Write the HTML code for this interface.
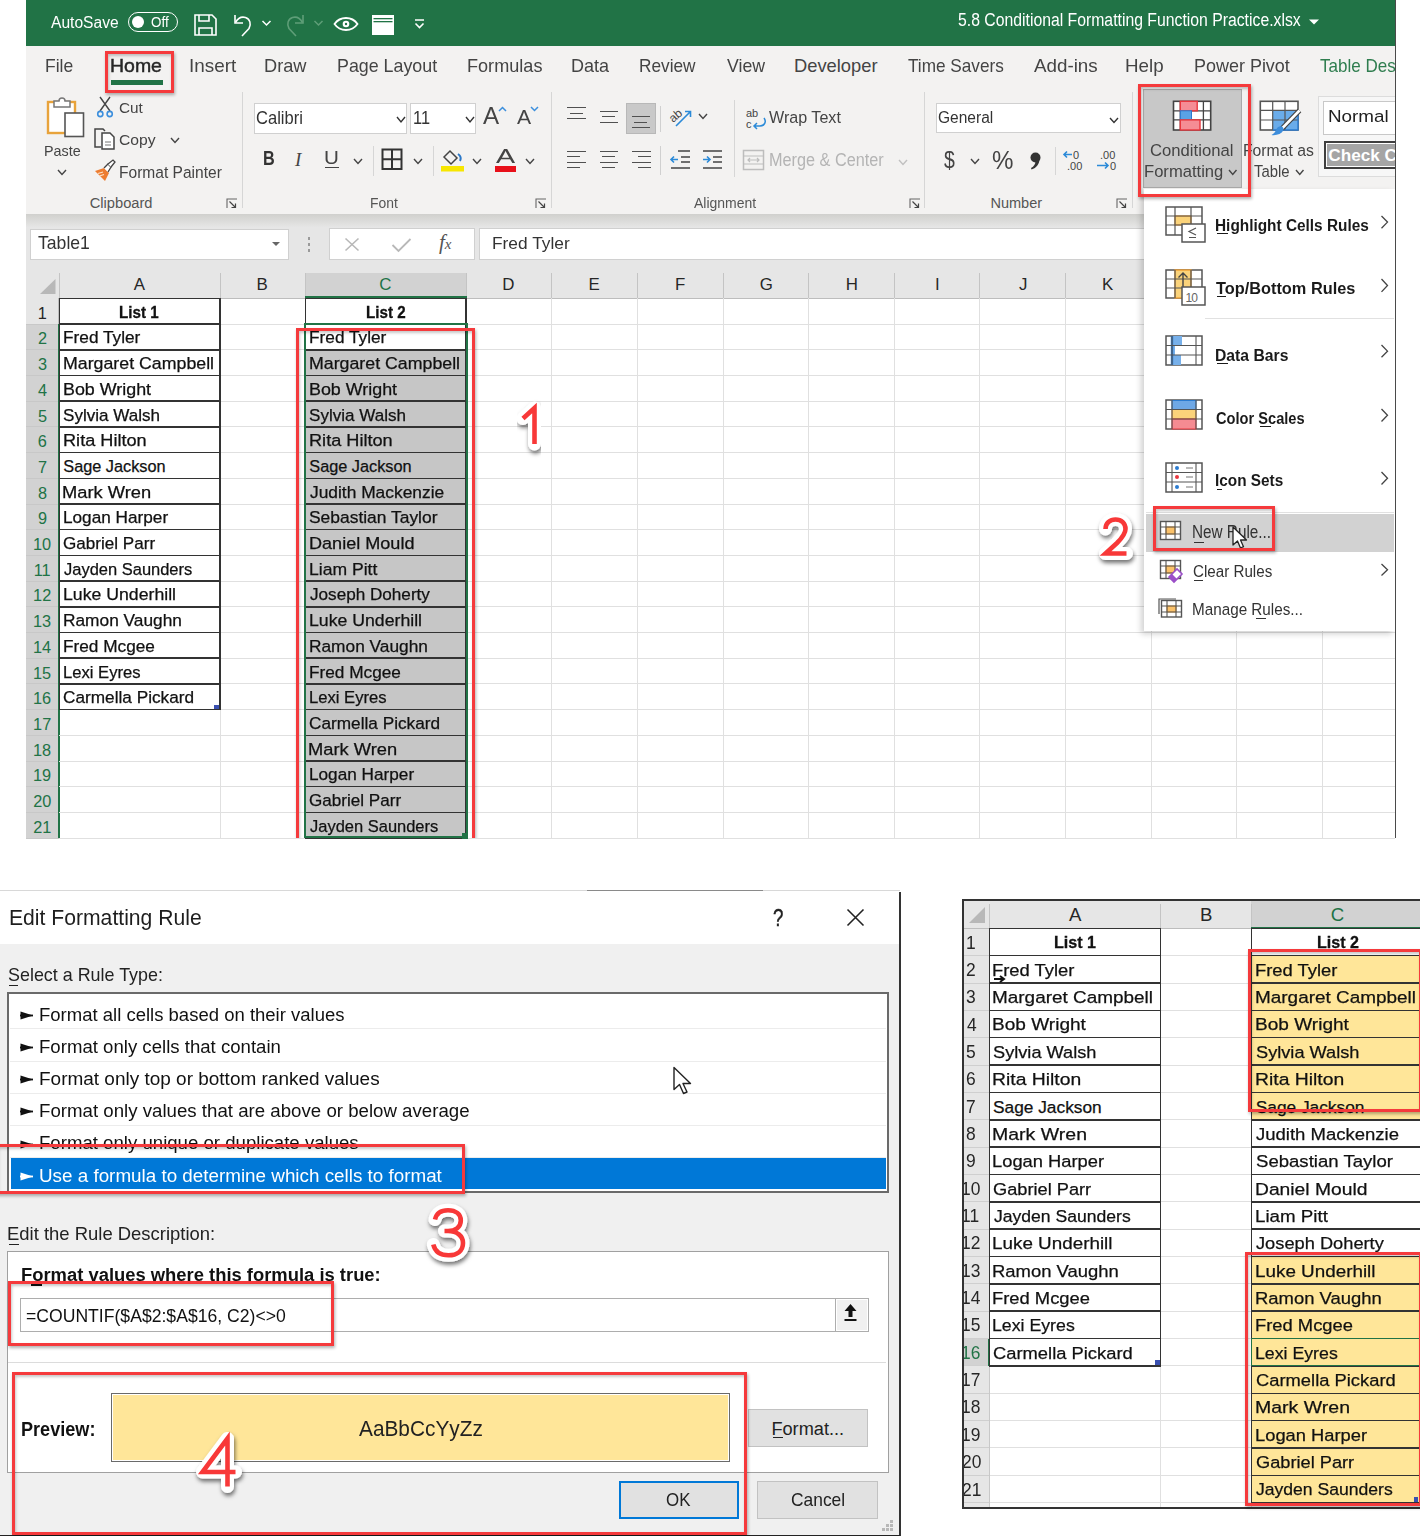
<!DOCTYPE html>
<html><head><meta charset="utf-8"><title>Excel Conditional Formatting</title>
<style>
html,body{margin:0;padding:0;background:#fff;}
body{width:1420px;height:1536px;position:relative;overflow:hidden;font-family:"Liberation Sans",sans-serif;}
.a{position:absolute;}
.t{position:absolute;white-space:nowrap;line-height:1;transform-origin:0 0;}
svg.a{overflow:visible;}
</style></head><body>
<div class="a" style="left:26px;top:0px;width:1369px;height:46px;background:#217346;"></div>
<div class="t" style="left:51.36px;top:13.59px;font-size:16.44px;color:#fff;transform:scaleX(0.9488);">AutoSave</div>
<div class="a" style="left:127.5px;top:11.5px;width:50px;height:20px;box-sizing:border-box;border:1.6px solid #fff;border-radius:10px;"></div>
<div class="a" style="left:131.5px;top:15.5px;width:12px;height:12px;border-radius:50%;background:#fff;"></div>
<div class="t" style="left:151.36px;top:14.07px;font-size:15.27px;color:#fff;transform:scaleX(0.8765);">Off</div>
<svg class="a" style="left:193px;top:13px;" width="25" height="24" viewBox="0 0 25 24"><path d="M2 2h17l4 4v16H2z" fill="none" stroke="#fff" stroke-width="1.6"/><path d="M6 2v6h10V2" fill="none" stroke="#fff" stroke-width="1.6"/><path d="M6 22v-7h13v7" fill="none" stroke="#fff" stroke-width="1.6"/></svg>
<svg class="a" style="left:231px;top:12px;" width="24" height="25" viewBox="0 0 24 25"><path d="M4 3v8h8" fill="none" stroke="#fff" stroke-width="1.6"/><path d="M4.5 10.5C7 6 11 4.5 14.5 5.5c4.5 1.5 6 6.5 3.5 11L11 24" fill="none" stroke="#fff" stroke-width="1.6"/></svg>
<svg class="a" style="left:261px;top:19px;" width="11" height="8" viewBox="0 0 11 8"><path d="M1.5 2l4 4 4-4" fill="none" stroke="#fff" stroke-width="1.5"/></svg>
<svg class="a" style="left:283px;top:12px;" width="24" height="25" viewBox="0 0 24 25"><path d="M20 3v8h-8" fill="none" stroke="#5f9e78" stroke-width="1.6"/><path d="M19.5 10.5C17 6 13 4.5 9.5 5.5c-4.5 1.5-6 6.5-3.5 11L13 24" fill="none" stroke="#5f9e78" stroke-width="1.6"/></svg>
<svg class="a" style="left:313px;top:19px;" width="11" height="8" viewBox="0 0 11 8"><path d="M1.5 2l4 4 4-4" fill="none" stroke="#5f9e78" stroke-width="1.5"/></svg>
<svg class="a" style="left:333px;top:17px;" width="26" height="14" viewBox="0 0 26 14"><path d="M1.5 7C5 2 9 1 13 1s8 1 11.5 6C21 12 17 13 13 13S5 12 1.5 7z" fill="none" stroke="#fff" stroke-width="1.8"/><circle cx="13" cy="7" r="3.3" fill="#fff"/><circle cx="13" cy="7" r="1.2" fill="#217346"/></svg>
<svg class="a" style="left:371px;top:14px;" width="24" height="22" viewBox="0 0 24 22"><rect x="1" y="1" width="22" height="20" fill="#fff"/><rect x="2.5" y="4" width="19" height="1.3" fill="#217346"/><rect x="2.5" y="7" width="19" height="1.3" fill="#217346"/></svg>
<svg class="a" style="left:413px;top:18px;" width="13" height="12" viewBox="0 0 13 12"><path d="M2 2h9" stroke="#fff" stroke-width="1.5"/><path d="M2.5 5.5l4 4 4-4" fill="none" stroke="#fff" stroke-width="1.6"/></svg>
<div class="t" style="left:958.37px;top:12.1px;font-size:17.6px;color:#fff;transform:scaleX(0.8963);">5.8 Conditional Formatting Function Practice.xlsx</div>
<svg class="a" style="left:1308px;top:18px;" width="12" height="8" viewBox="0 0 12 8"><path d="M1 1.5h10l-5 5z" fill="#fff"/></svg>
<div class="a" style="left:26px;top:46px;width:1369px;height:168px;background:#f3f2f1;"></div>
<div class="t" style="left:44.86px;top:56.99px;font-size:18.33px;color:#444444;transform:scaleX(0.9553);">File</div>
<div class="t" style="left:188.65px;top:56.99px;font-size:18.33px;color:#444444;transform:scaleX(1.0299);">Insert</div>
<div class="t" style="left:264.4px;top:56.99px;font-size:18.33px;color:#444444;transform:scaleX(0.9945);">Draw</div>
<div class="t" style="left:337.03px;top:56.99px;font-size:18.33px;color:#444444;transform:scaleX(0.9728);">Page Layout</div>
<div class="t" style="left:466.51px;top:56.99px;font-size:18.33px;color:#444444;transform:scaleX(0.9875);">Formulas</div>
<div class="t" style="left:570.81px;top:56.99px;font-size:18.33px;color:#444444;transform:scaleX(0.9838);">Data</div>
<div class="t" style="left:638.98px;top:56.99px;font-size:18.33px;color:#444444;transform:scaleX(0.9412);">Review</div>
<div class="t" style="left:726.91px;top:56.99px;font-size:18.33px;color:#444444;transform:scaleX(0.9655);">View</div>
<div class="t" style="left:793.99px;top:56.99px;font-size:18.33px;color:#444444;">Developer</div>
<div class="t" style="left:907.81px;top:56.99px;font-size:18.33px;color:#444444;transform:scaleX(0.9375);">Time Savers</div>
<div class="t" style="left:1033.95px;top:56.99px;font-size:18.33px;color:#444444;transform:scaleX(1.0254);">Add-ins</div>
<div class="t" style="left:1124.95px;top:56.99px;font-size:18.33px;color:#444444;transform:scaleX(1.0249);">Help</div>
<div class="t" style="left:1193.52px;top:56.99px;font-size:18.33px;color:#444444;transform:scaleX(0.9800);">Power Pivot</div>
<div class="t" style="left:110.19px;top:56.99px;font-size:18.33px;color:#262626;transform:scaleX(1.0623);-webkit-text-stroke:0.45px #262626;">Home</div>
<div class="a" style="left:1300px;top:50px;width:95px;height:36px;overflow:hidden;">

<div class="t" style="left:19.82px;top:6.99px;font-size:18.33px;color:#2f7d4f;transform:scaleX(0.9297);">Table Design</div></div>
<div class="a" style="left:111px;top:80px;width:52px;height:4.5px;background:#217346;"></div>
<svg class="a" style="left:44px;top:95px;" width="42" height="44" viewBox="0 0 42 44"><rect x="4" y="7" width="27" height="31" fill="#fff" stroke="#e8a33b" stroke-width="2.4"/><path d="M10 12V6h5a3 3 0 0 1 6 0h5v6z" fill="#fff" stroke="#777" stroke-width="1.5"/><rect x="21" y="18" width="18.5" height="23.5" fill="#fff" stroke="#555" stroke-width="1.6"/></svg>
<div class="t" style="left:43.52px;top:142.85px;font-size:15.42px;color:#444444;transform:scaleX(0.9315);">Paste</div>
<svg class="a" style="left:57px;top:168.5px;" width="10" height="6.5" viewBox="0 0 10 6.5"><path d="M1 1l4.0 4.5l4.0 -4.5" fill="none" stroke="#444" stroke-width="1.4"/></svg>
<svg class="a" style="left:96px;top:96px;" width="18" height="23" viewBox="0 0 18 23"><path d="M4 1l10 14M14 1L4 15" stroke="#444" stroke-width="1.4" fill="none"/><circle cx="4.3" cy="18" r="2.6" fill="none" stroke="#3c8fdd" stroke-width="1.6"/><circle cx="13.7" cy="18" r="2.6" fill="none" stroke="#3c8fdd" stroke-width="1.6"/></svg>
<div class="t" style="left:119.23px;top:100.32px;font-size:14.98px;color:#444444;transform:scaleX(1.0252);">Cut</div>
<svg class="a" style="left:93px;top:128px;" width="24" height="23" viewBox="0 0 24 23"><path d="M8 19H2V1h8l2 2" fill="none" stroke="#444" stroke-width="1.5"/><path d="M9 5h8l4 4v12H9z" fill="#fff" stroke="#444" stroke-width="1.5"/><path d="M12 14h6M12 17h6" stroke="#777" stroke-width="1"/></svg>
<div class="t" style="left:119.22px;top:132.07px;font-size:15.27px;color:#444444;transform:scaleX(1.0270);">Copy</div>
<svg class="a" style="left:170px;top:137px;" width="10" height="6.5" viewBox="0 0 10 6.5"><path d="M1 1l4.0 4.5l4.0 -4.5" fill="none" stroke="#444" stroke-width="1.4"/></svg>
<svg class="a" style="left:93px;top:159px;" width="24" height="23" viewBox="0 0 24 23"><path d="M2 12l9-3 5 5-4 8z" fill="#ed7d31"/><path d="M5 14.5l5-1.5M6.5 17l4.5-1.5" stroke="#fde2c8" stroke-width="1.2"/><path d="M11 9l4-4 3 3-3 5" fill="#fff" stroke="#444" stroke-width="1.3"/><path d="M15 5l5-4 2 2-4 5" fill="#fff" stroke="#444" stroke-width="1.3"/></svg>
<div class="t" style="left:119.32px;top:163.71px;font-size:16.29px;color:#444444;transform:scaleX(0.9554);">Format Painter</div>
<div class="t" style="left:89.67px;top:196.46px;font-size:14.69px;color:#555;">Clipboard</div>
<svg class="a" style="left:226px;top:198px;" width="12" height="11" viewBox="0 0 12 11"><path d="M1 10V1h10" fill="none" stroke="#666" stroke-width="1.1"/><path d="M3.5 3.5l6 6M5.5 9.5h4v-4" fill="none" stroke="#444" stroke-width="1.2"/></svg>
<div class="a" style="left:242px;top:92px;width:1px;height:116px;background:#d6d6d6;"></div>
<div class="a" style="left:253.9px;top:103.4px;width:153.5px;height:30.4px;box-sizing:border-box;border:1px solid #d0d0d0;background:#fff;"></div>
<div class="t" style="left:256.37px;top:109.52px;font-size:17.45px;color:#333;transform:scaleX(0.9487);">Calibri</div>
<svg class="a" style="left:395.5px;top:116px;" width="10" height="7" viewBox="0 0 10 7"><path d="M1 1l4.0 5l4.0 -5" fill="none" stroke="#333" stroke-width="1.4"/></svg>
<div class="a" style="left:410.3px;top:103.4px;width:65.4px;height:30.4px;box-sizing:border-box;border:1px solid #d0d0d0;background:#fff;"></div>
<div class="t" style="left:412.77px;top:109.52px;font-size:17.45px;color:#333;transform:scaleX(0.9392);">11</div>
<svg class="a" style="left:464.5px;top:116px;" width="10" height="7" viewBox="0 0 10 7"><path d="M1 1l4.0 5l4.0 -5" fill="none" stroke="#333" stroke-width="1.4"/></svg>
<div class="t" style="left:483.44px;top:104.11px;font-size:23.85px;color:#444;transform:scaleX(1.0124);">A</div>
<svg class="a" style="left:498px;top:106px;" width="9" height="6" viewBox="0 0 9 6"><path d="M1 5l3.5-3.5L8 5" fill="none" stroke="#3c8fdd" stroke-width="1.5"/></svg>
<div class="t" style="left:517.35px;top:107.06px;font-size:20.36px;color:#444;transform:scaleX(1.0377);">A</div>
<svg class="a" style="left:530px;top:106px;" width="9" height="6" viewBox="0 0 9 6"><path d="M1 1l3.5 3.5L8 1" fill="none" stroke="#3c8fdd" stroke-width="1.5"/></svg>
<div class="t" style="left:262.8px;top:149.12px;font-size:19.35px;color:#333;font-weight:bold;transform:scaleX(0.8389);">B</div>
<div class="t" style="left:295px;top:150px;font-size:19px;color:#444;font-family:'Liberation Serif',serif;font-style:italic;">I</div>
<div class="t" style="left:324.4px;top:149.24px;font-size:18.62px;color:#444;transform:scaleX(1.1073);">U</div>
<div class="a" style="left:325px;top:167px;width:14px;height:1.2px;background:#444;"></div>
<svg class="a" style="left:352.5px;top:158px;" width="10" height="6.5" viewBox="0 0 10 6.5"><path d="M1 1l4.0 4.5l4.0 -4.5" fill="none" stroke="#444" stroke-width="1.4"/></svg>
<div class="a" style="left:373px;top:146px;width:1px;height:30px;background:#d6d6d6;"></div>
<svg class="a" style="left:381px;top:148px;" width="22" height="23" viewBox="0 0 22 23"><rect x="1.5" y="1.5" width="19" height="19.5" fill="none" stroke="#333" stroke-width="2"/><path d="M11 1.5v19.5M1.5 11.2h19" stroke="#333" stroke-width="2"/></svg>
<svg class="a" style="left:412.5px;top:158px;" width="10" height="6.5" viewBox="0 0 10 6.5"><path d="M1 1l4.0 4.5l4.0 -4.5" fill="none" stroke="#444" stroke-width="1.4"/></svg>
<div class="a" style="left:433px;top:146px;width:1px;height:30px;background:#d6d6d6;"></div>
<svg class="a" style="left:440px;top:148px;" width="26" height="24" viewBox="0 0 26 24"><path d="M4 9l6-6 7 7-6 6z" fill="none" stroke="#444" stroke-width="1.5"/><path d="M18 6c3 2 3 5 2 7" fill="none" stroke="#2b78c8" stroke-width="2"/><rect x="1" y="18" width="23" height="5.5" fill="#f7e600"/></svg>
<svg class="a" style="left:472.4px;top:158px;" width="10" height="6.5" viewBox="0 0 10 6.5"><path d="M1 1l4.0 4.5l4.0 -4.5" fill="none" stroke="#444" stroke-width="1.4"/></svg>
<div class="t" style="left:495.93px;top:147.33px;font-size:19.93px;color:#444;transform:scaleX(1.4392);">A</div>
<div class="a" style="left:494.6px;top:166px;width:21px;height:5.5px;background:#e8101a;"></div>
<svg class="a" style="left:525px;top:158px;" width="10" height="6.5" viewBox="0 0 10 6.5"><path d="M1 1l4.0 4.5l4.0 -4.5" fill="none" stroke="#444" stroke-width="1.4"/></svg>
<div class="t" style="left:370.25px;top:196.41px;font-size:14.4px;color:#555;transform:scaleX(0.9671);">Font</div>
<svg class="a" style="left:534.5px;top:198px;" width="12" height="11" viewBox="0 0 12 11"><path d="M1 10V1h10" fill="none" stroke="#666" stroke-width="1.1"/><path d="M3.5 3.5l6 6M5.5 9.5h4v-4" fill="none" stroke="#444" stroke-width="1.2"/></svg>
<div class="a" style="left:550.5px;top:92px;width:1px;height:116px;background:#d6d6d6;"></div>
<div class="a" style="left:567.4px;top:107px;width:18.6px;height:1.3px;background:#505050;"></div>
<div class="a" style="left:570.2px;top:112.5px;width:13px;height:1.3px;background:#505050;"></div>
<div class="a" style="left:567.4px;top:118px;width:18.6px;height:1.3px;background:#505050;"></div>
<div class="a" style="left:599.5px;top:110.5px;width:18.5px;height:1.3px;background:#505050;"></div>
<div class="a" style="left:602.25px;top:116px;width:13px;height:1.3px;background:#505050;"></div>
<div class="a" style="left:599.5px;top:121.5px;width:18.5px;height:1.3px;background:#505050;"></div>
<div class="a" style="left:626.3px;top:103px;width:29.4px;height:30.8px;box-sizing:border-box;border:1px solid #b8b8b8;background:#c9c9c9;"></div>
<div class="a" style="left:631.6px;top:116px;width:18.4px;height:1.3px;background:#505050;"></div>
<div class="a" style="left:634.3px;top:121.5px;width:13px;height:1.3px;background:#505050;"></div>
<div class="a" style="left:631.6px;top:127px;width:18.4px;height:1.3px;background:#505050;"></div>
<div class="a" style="left:660.2px;top:105.7px;width:1px;height:26.8px;background:#d0d0d0;"></div>
<svg class="a" style="left:668px;top:106px;" width="26" height="22" viewBox="0 0 26 22"><text x="1" y="14" font-size="12" font-family="Liberation Sans" fill="#444" transform="rotate(-40 7 10)">ab</text><path d="M8 20L22 6M17 5.5h5.5V11" fill="none" stroke="#2b8ad8" stroke-width="1.6"/></svg>
<svg class="a" style="left:697.5px;top:113px;" width="10" height="6.5" viewBox="0 0 10 6.5"><path d="M1 1l4.0 4.5l4.0 -4.5" fill="none" stroke="#444" stroke-width="1.4"/></svg>
<div class="a" style="left:734px;top:100px;width:1px;height:76.6px;background:#d6d6d6;"></div>
<svg class="a" style="left:745px;top:107px;" width="22" height="23" viewBox="0 0 22 23"><text x="1" y="10" font-size="11" font-family="Liberation Sans" fill="#444">ab</text><text x="1" y="21" font-size="11" font-family="Liberation Sans" fill="#444">c</text><path d="M19 11c3 4 0 8-4 8H9M12 16l-3 3 3 3" fill="none" stroke="#2b8ad8" stroke-width="1.5"/></svg>
<div class="t" style="left:769.32px;top:109.74px;font-size:16.73px;color:#444444;transform:scaleX(0.9627);">Wrap Text</div>
<div class="a" style="left:567.4px;top:150.7px;width:18.6px;height:1.3px;background:#505050;"></div>
<div class="a" style="left:567.4px;top:156.2px;width:13px;height:1.3px;background:#505050;"></div>
<div class="a" style="left:567.4px;top:161.7px;width:18.6px;height:1.3px;background:#505050;"></div>
<div class="a" style="left:567.4px;top:167.2px;width:13px;height:1.3px;background:#505050;"></div>
<div class="a" style="left:599.5px;top:150.7px;width:18.5px;height:1.3px;background:#505050;"></div>
<div class="a" style="left:602.25px;top:156.2px;width:13px;height:1.3px;background:#505050;"></div>
<div class="a" style="left:599.5px;top:161.7px;width:18.5px;height:1.3px;background:#505050;"></div>
<div class="a" style="left:602.25px;top:167.2px;width:13px;height:1.3px;background:#505050;"></div>
<div class="a" style="left:631.6px;top:150.7px;width:19.4px;height:1.3px;background:#505050;"></div>
<div class="a" style="left:638px;top:156.2px;width:13px;height:1.3px;background:#505050;"></div>
<div class="a" style="left:631.6px;top:161.7px;width:19.4px;height:1.3px;background:#505050;"></div>
<div class="a" style="left:638px;top:167.2px;width:13px;height:1.3px;background:#505050;"></div>
<div class="a" style="left:660.2px;top:145.8px;width:1px;height:29.2px;background:#d0d0d0;"></div>
<svg class="a" style="left:669px;top:149px;" width="23" height="21" viewBox="0 0 23 21"><path d="M9 2h12M12 8h9M12 13h9M2 19h19" stroke="#444" stroke-width="1.6"/><path d="M9 10.5H2M5 7.5l-3 3 3 3" fill="none" stroke="#2b8ad8" stroke-width="1.6"/></svg>
<svg class="a" style="left:701px;top:149px;" width="23" height="21" viewBox="0 0 23 21"><path d="M2 2h19M12 8h9M12 13h9M2 19h19" stroke="#444" stroke-width="1.6"/><path d="M2 10.5h7M6 7.5l3 3-3 3" fill="none" stroke="#2b8ad8" stroke-width="1.6"/></svg>
<svg class="a" style="left:742px;top:149px;" width="23" height="22" viewBox="0 0 23 22"><rect x="1.5" y="1.5" width="20" height="19" fill="none" stroke="#bdbdbd" stroke-width="1.5"/><path d="M1.5 7h20M1.5 15h20" stroke="#bdbdbd" stroke-width="1.2"/><path d="M6 11h11M8 9l-2 2 2 2M15 9l2 2-2 2" fill="none" stroke="#bdbdbd" stroke-width="1.2"/></svg>
<div class="t" style="left:768.66px;top:152.4px;font-size:17.6px;color:#b4b4b4;transform:scaleX(0.9241);">Merge &amp; Center</div>
<svg class="a" style="left:897.5px;top:159px;" width="10" height="6.5" viewBox="0 0 10 6.5"><path d="M1 1l4.0 4.5l4.0 -4.5" fill="none" stroke="#c0c0c0" stroke-width="1.4"/></svg>
<div class="t" style="left:694.47px;top:195.69px;font-size:14.55px;color:#555;transform:scaleX(0.9621);">Alignment</div>
<svg class="a" style="left:908.6px;top:198px;" width="12" height="11" viewBox="0 0 12 11"><path d="M1 10V1h10" fill="none" stroke="#666" stroke-width="1.1"/><path d="M3.5 3.5l6 6M5.5 9.5h4v-4" fill="none" stroke="#444" stroke-width="1.2"/></svg>
<div class="a" style="left:924px;top:92px;width:1px;height:116px;background:#d6d6d6;"></div>
<div class="a" style="left:935.8px;top:103.2px;width:185.7px;height:30.1px;box-sizing:border-box;border:1px solid #d0d0d0;background:#fff;"></div>
<div class="t" style="left:937.92px;top:109.39px;font-size:17.02px;color:#333;transform:scaleX(0.9122);">General</div>
<svg class="a" style="left:1109.4px;top:116.9px;" width="10" height="6.5" viewBox="0 0 10 6.5"><path d="M1 1l4.0 4.5l4.0 -4.5" fill="none" stroke="#333" stroke-width="1.4"/></svg>
<div class="t" style="left:944.41px;top:147.68px;font-size:24px;color:#444;transform:scaleX(0.8097);">$</div>
<svg class="a" style="left:970.4px;top:158.4px;" width="10" height="6.5" viewBox="0 0 10 6.5"><path d="M1 1l4.0 4.5l4.0 -4.5" fill="none" stroke="#444" stroke-width="1.4"/></svg>
<div class="t" style="left:992.05px;top:147.09px;font-size:26.47px;color:#444;transform:scaleX(0.9121);">%</div>
<svg class="a" style="left:1029px;top:152px;" width="13" height="18" viewBox="0 0 13 18"><circle cx="6.5" cy="5.5" r="5" fill="#333"/><path d="M10.5 7c0 5-3 9-8 10.5l-.5-1.5c3-1.5 4.5-4 4.5-7" fill="#333"/></svg>
<div class="a" style="left:1054.7px;top:146.5px;width:1px;height:28.5px;background:#d6d6d6;"></div>
<svg class="a" style="left:1062px;top:149px;" width="24" height="22" viewBox="0 0 24 22"><text x="11" y="9.5" font-size="11" font-family="Liberation Sans" fill="#444">0</text><text x="5" y="20.5" font-size="11" font-family="Liberation Sans" fill="#444">.00</text><path d="M10 5.5H2M5 2.5l-3 3 3 3" fill="none" stroke="#2b8ad8" stroke-width="1.6"/></svg>
<svg class="a" style="left:1095px;top:149px;" width="24" height="22" viewBox="0 0 24 22"><text x="5" y="9.5" font-size="11" font-family="Liberation Sans" fill="#444">.00</text><text x="15" y="20.5" font-size="11" font-family="Liberation Sans" fill="#444">0</text><path d="M2 16.5h11M10 13.5l3 3-3 3" fill="none" stroke="#2b8ad8" stroke-width="1.6"/></svg>
<div class="t" style="left:990.4px;top:196.49px;font-size:14.55px;color:#555;">Number</div>
<svg class="a" style="left:1115.7px;top:198px;" width="12" height="11" viewBox="0 0 12 11"><path d="M1 10V1h10" fill="none" stroke="#666" stroke-width="1.1"/><path d="M3.5 3.5l6 6M5.5 9.5h4v-4" fill="none" stroke="#444" stroke-width="1.2"/></svg>
<div class="a" style="left:1131.5px;top:92px;width:1px;height:116px;background:#d6d6d6;"></div>
<div class="a" style="left:1142.8px;top:89.3px;width:99px;height:98.9px;box-sizing:border-box;border:1px solid #a9a9a9;background:#c8c8c8;"></div>
<svg class="a" style="left:1172px;top:99px;" width="41" height="33" viewBox="0 0 41 33"><rect x="1.5" y="2.3" width="37.2" height="28.7" fill="#fff" stroke="#444" stroke-width="1.6"/><path d="M8.3 2.3v28.7M31.4 2.3v28.7M1.5 11.8h37.2M1.5 20.9h37.2" stroke="#444" stroke-width="1.3"/><rect x="8.3" y="2.3" width="16.9" height="9.5" fill="#f58d95" stroke="#e8373e" stroke-width="1.4"/><rect x="8.3" y="11.8" width="11.2" height="9.1" fill="#5aa3e6" stroke="#2b7bd0" stroke-width="1"/><rect x="8.3" y="20.9" width="19.7" height="10.1" fill="#f58d95" stroke="#e8373e" stroke-width="1.4"/></svg>
<div class="t" style="left:1150.07px;top:142.43px;font-size:16.15px;color:#444444;transform:scaleX(1.0328);">Conditional</div>
<div class="t" style="left:1144.43px;top:162.81px;font-size:16.29px;color:#444444;transform:scaleX(1.0190);">Formatting</div>
<svg class="a" style="left:1228.3px;top:169px;" width="9.5" height="6.5" viewBox="0 0 9.5 6.5"><path d="M1 1l3.75 4.5l3.75 -4.5" fill="none" stroke="#444" stroke-width="1.4"/></svg>
<svg class="a" style="left:1259px;top:99px;" width="43" height="39" viewBox="0 0 43 39"><rect x="1.3" y="2.3" width="37.7" height="28.7" fill="#fff" stroke="#555" stroke-width="1.6"/><rect x="13.7" y="11.3" width="25.3" height="19.7" fill="#6aacea"/><path d="M13.7 2.3v28.7M26 2.3v28.7M1.3 11.3h37.7M1.3 21h37.7" stroke="#555" stroke-width="1.2"/><path d="M13.7 31h25.3V11.3" fill="none" stroke="#2b7bd0" stroke-width="1.4"/><path d="M40.5 11.5L23 29.5" stroke="#444" stroke-width="5"/><path d="M40.5 11.5L23 29.5" stroke="#fff" stroke-width="2.6"/><path d="M12.5 36c2-1 4-3 5-6 1.5-3 5-3.5 6.5-1.5 1.5 2-0.5 5-3.5 6.5-2.5 1-5.5 1.5-8 1z" fill="#3d8ddb"/></svg>
<div class="t" style="left:1242.9px;top:142.43px;font-size:16.15px;color:#444444;transform:scaleX(0.9752);">Format as</div>
<div class="t" style="left:1254.07px;top:162.93px;font-size:16.15px;color:#444444;transform:scaleX(0.9217);">Table</div>
<svg class="a" style="left:1294.6px;top:169px;" width="9.5" height="6.5" viewBox="0 0 9.5 6.5"><path d="M1 1l3.75 4.5l3.75 -4.5" fill="none" stroke="#444" stroke-width="1.4"/></svg>
<div class="a" style="left:1318px;top:95.9px;width:82px;height:81.1px;box-sizing:border-box;border:1px solid #dcdcdc;background:#f7f7f7;"></div>
<div class="a" style="left:1322.6px;top:100.5px;width:77.4px;height:34.5px;box-sizing:border-box;border:1px solid #c8c8c8;background:#fff;"></div>
<div class="t" style="left:1328.45px;top:108.07px;font-size:17.16px;color:#1f1f1f;transform:scaleX(1.0979);">Normal</div>
<div class="a" style="left:1324.4px;top:140.7px;width:75.6px;height:28.5px;box-sizing:border-box;border:2px solid #3f3f3f;background:#a5a5a5;box-shadow: inset 0 0 0 1px #fff;"></div>
<div class="t" style="left:1328.31px;top:147.47px;font-size:17.16px;color:#fff;font-weight:bold;">Check Cell</div>
<div class="a" style="left:26px;top:214px;width:1369px;height:14px;background:linear-gradient(#d0d0cd,#e7e7e7);"></div>
<div class="a" style="left:26px;top:228px;width:1369px;height:70px;background:#e6e6e6;"></div>
<div class="a" style="left:30px;top:228.5px;width:258.5px;height:31.5px;box-sizing:border-box;border:1px solid #d0d0d0;background:#fff;"></div>
<div class="t" style="left:38px;top:235.38px;font-size:17.75px;color:#333;transform:scaleX(0.9918);">Table1</div>
<svg class="a" style="left:271px;top:241px;" width="10" height="6" viewBox="0 0 10 6"><path d="M1 1h8l-4 4z" fill="#666"/></svg>
<div class="a" style="left:307.5px;top:237px;width:2.5px;height:2.5px;background:#9a9a9a;"></div>
<div class="a" style="left:307.5px;top:243px;width:2.5px;height:2.5px;background:#9a9a9a;"></div>
<div class="a" style="left:307.5px;top:249px;width:2.5px;height:2.5px;background:#9a9a9a;"></div>
<div class="a" style="left:328.5px;top:228.4px;width:146.5px;height:31.4px;box-sizing:border-box;border:1px solid #d0d0d0;background:#fff;"></div>
<svg class="a" style="left:344px;top:237px;" width="17" height="15" viewBox="0 0 17 15"><path d="M1.5 1.5l13 12M14.5 1.5l-13 12" stroke="#b8b8b8" stroke-width="1.6"/></svg>
<svg class="a" style="left:391px;top:237px;" width="21" height="16" viewBox="0 0 21 16"><path d="M1.5 8l6 6L19.5 2" fill="none" stroke="#b8b8b8" stroke-width="1.8"/></svg>
<div class="t" style="left:439px;top:232px;font-size:21px;color:#555;font-family:'Liberation Serif',serif;font-style:italic;">f<span style="font-size:15px">x</span></div>
<div class="a" style="left:478.6px;top:228.4px;width:921.4px;height:31.4px;box-sizing:border-box;border:1px solid #d0d0d0;background:#fff;"></div>
<div class="t" style="left:492.37px;top:236.36px;font-size:16.58px;color:#333;transform:scaleX(1.0452);">Fred Tyler</div>
<div class="a" style="left:59px;top:298.4px;width:1336px;height:539.6px;background:#fff;"></div>
<div class="a" style="left:26px;top:260px;width:1369px;height:38.4px;background:#e6e6e6;"></div>
<div class="a" style="left:305px;top:272.6px;width:161px;height:25.8px;background:#d2d2d2;"></div>
<div class="a" style="left:58.5px;top:273px;width:1px;height:25.4px;background:#c4c4c4;"></div>
<div class="a" style="left:219.5px;top:273px;width:1px;height:25.4px;background:#c4c4c4;"></div>
<div class="a" style="left:304.5px;top:273px;width:1px;height:25.4px;background:#c4c4c4;"></div>
<div class="a" style="left:465.5px;top:273px;width:1px;height:25.4px;background:#c4c4c4;"></div>
<div class="a" style="left:550.8px;top:273px;width:1px;height:25.4px;background:#c4c4c4;"></div>
<div class="a" style="left:636.9px;top:273px;width:1px;height:25.4px;background:#c4c4c4;"></div>
<div class="a" style="left:722.9px;top:273px;width:1px;height:25.4px;background:#c4c4c4;"></div>
<div class="a" style="left:808.4px;top:273px;width:1px;height:25.4px;background:#c4c4c4;"></div>
<div class="a" style="left:894.4px;top:273px;width:1px;height:25.4px;background:#c4c4c4;"></div>
<div class="a" style="left:979.4px;top:273px;width:1px;height:25.4px;background:#c4c4c4;"></div>
<div class="a" style="left:1064.9px;top:273px;width:1px;height:25.4px;background:#c4c4c4;"></div>
<div class="a" style="left:1150.5px;top:273px;width:1px;height:25.4px;background:#c4c4c4;"></div>
<div class="a" style="left:1236px;top:273px;width:1px;height:25.4px;background:#c4c4c4;"></div>
<div class="a" style="left:1321.5px;top:273px;width:1px;height:25.4px;background:#c4c4c4;"></div>
<div class="a" style="left:26px;top:297.6px;width:1369px;height:1px;background:#bdbdbd;"></div>
<div class="a" style="left:305px;top:296.4px;width:161.6px;height:2px;background:#217346;"></div>
<div class="t" style="left:133.87px;top:277.22px;font-size:16.87px;color:#262626;">A</div>
<div class="t" style="left:256.62px;top:277.22px;font-size:16.87px;color:#262626;">B</div>
<div class="t" style="left:379.3px;top:277.22px;font-size:16.87px;color:#217346;">C</div>
<div class="t" style="left:502.26px;top:277.22px;font-size:16.87px;color:#262626;">D</div>
<div class="t" style="left:588.38px;top:277.22px;font-size:16.87px;color:#262626;">E</div>
<div class="t" style="left:674.9px;top:277.22px;font-size:16.87px;color:#262626;">F</div>
<div class="t" style="left:759.8px;top:277.22px;font-size:16.87px;color:#262626;">G</div>
<div class="t" style="left:845.8px;top:277.22px;font-size:16.87px;color:#262626;">H</div>
<div class="t" style="left:935.06px;top:277.22px;font-size:16.87px;color:#262626;">I</div>
<div class="t" style="left:1018.94px;top:277.22px;font-size:16.87px;color:#262626;">J</div>
<div class="t" style="left:1101.98px;top:277.22px;font-size:16.87px;color:#262626;">K</div>
<div class="t" style="left:1188.65px;top:277.22px;font-size:16.87px;color:#262626;">L</div>
<div class="t" style="left:1272.23px;top:277.22px;font-size:16.87px;color:#262626;">M</div>
<svg class="a" style="left:38px;top:278px;" width="19" height="17" viewBox="0 0 19 17"><path d="M17.5 1v15H2z" fill="#b8b8b8"/></svg>
<div class="a" style="left:26px;top:298.4px;width:33px;height:539.6px;background:#e6e6e6;"></div>
<div class="a" style="left:26px;top:324.1px;width:33px;height:513.9px;background:#d2d2d2;"></div>
<div class="a" style="left:26px;top:323.6px;width:33px;height:1px;background:#c8c8c8;"></div>
<div class="t" style="left:37.69px;top:304.71px;font-size:16.29px;color:#262626;">1</div>
<div class="a" style="left:26px;top:349.3px;width:33px;height:1px;background:#c8c8c8;"></div>
<div class="t" style="left:37.91px;top:330.41px;font-size:16.29px;color:#217346;">2</div>
<div class="a" style="left:26px;top:375px;width:33px;height:1px;background:#c8c8c8;"></div>
<div class="t" style="left:37.95px;top:356.11px;font-size:16.29px;color:#217346;">3</div>
<div class="a" style="left:26px;top:400.7px;width:33px;height:1px;background:#c8c8c8;"></div>
<div class="t" style="left:37.95px;top:381.81px;font-size:16.29px;color:#217346;">4</div>
<div class="a" style="left:26px;top:426.4px;width:33px;height:1px;background:#c8c8c8;"></div>
<div class="t" style="left:37.91px;top:407.51px;font-size:16.29px;color:#217346;">5</div>
<div class="a" style="left:26px;top:452.1px;width:33px;height:1px;background:#c8c8c8;"></div>
<div class="t" style="left:37.85px;top:433.21px;font-size:16.29px;color:#217346;">6</div>
<div class="a" style="left:26px;top:477.8px;width:33px;height:1px;background:#c8c8c8;"></div>
<div class="t" style="left:37.91px;top:458.91px;font-size:16.29px;color:#217346;">7</div>
<div class="a" style="left:26px;top:503.5px;width:33px;height:1px;background:#c8c8c8;"></div>
<div class="t" style="left:37.91px;top:484.61px;font-size:16.29px;color:#217346;">8</div>
<div class="a" style="left:26px;top:529.2px;width:33px;height:1px;background:#c8c8c8;"></div>
<div class="t" style="left:37.89px;top:510.31px;font-size:16.29px;color:#217346;">9</div>
<div class="a" style="left:26px;top:554.9px;width:33px;height:1px;background:#c8c8c8;"></div>
<div class="t" style="left:33.01px;top:536.01px;font-size:16.29px;color:#217346;">10</div>
<div class="a" style="left:26px;top:580.6px;width:33px;height:1px;background:#c8c8c8;"></div>
<div class="t" style="left:33.69px;top:561.71px;font-size:16.29px;color:#217346;">11</div>
<div class="a" style="left:26px;top:606.3px;width:33px;height:1px;background:#c8c8c8;"></div>
<div class="t" style="left:33.11px;top:587.41px;font-size:16.29px;color:#217346;">12</div>
<div class="a" style="left:26px;top:632px;width:33px;height:1px;background:#c8c8c8;"></div>
<div class="t" style="left:33.05px;top:613.11px;font-size:16.29px;color:#217346;">13</div>
<div class="a" style="left:26px;top:657.7px;width:33px;height:1px;background:#c8c8c8;"></div>
<div class="t" style="left:32.93px;top:638.81px;font-size:16.29px;color:#217346;">14</div>
<div class="a" style="left:26px;top:683.4px;width:33px;height:1px;background:#c8c8c8;"></div>
<div class="t" style="left:33.03px;top:664.51px;font-size:16.29px;color:#217346;">15</div>
<div class="a" style="left:26px;top:709.1px;width:33px;height:1px;background:#c8c8c8;"></div>
<div class="t" style="left:33.05px;top:690.21px;font-size:16.29px;color:#217346;">16</div>
<div class="a" style="left:26px;top:734.8px;width:33px;height:1px;background:#c8c8c8;"></div>
<div class="t" style="left:33.11px;top:715.91px;font-size:16.29px;color:#217346;">17</div>
<div class="a" style="left:26px;top:760.5px;width:33px;height:1px;background:#c8c8c8;"></div>
<div class="t" style="left:33.05px;top:741.61px;font-size:16.29px;color:#217346;">18</div>
<div class="a" style="left:26px;top:786.2px;width:33px;height:1px;background:#c8c8c8;"></div>
<div class="t" style="left:33.07px;top:767.31px;font-size:16.29px;color:#217346;">19</div>
<div class="a" style="left:26px;top:811.9px;width:33px;height:1px;background:#c8c8c8;"></div>
<div class="t" style="left:33.21px;top:793.01px;font-size:16.29px;color:#217346;">20</div>
<div class="a" style="left:26px;top:837.6px;width:33px;height:1px;background:#c8c8c8;"></div>
<div class="t" style="left:33.29px;top:818.71px;font-size:16.29px;color:#217346;">21</div>
<div class="a" style="left:58px;top:298.4px;width:1px;height:25.7px;background:#bdbdbd;"></div>
<div class="a" style="left:57.5px;top:324.1px;width:2px;height:513.9px;background:#217346;"></div>
<div class="a" style="left:59px;top:323.6px;width:1336px;height:1px;background:#e0e0e0;"></div>
<div class="a" style="left:59px;top:349.3px;width:1336px;height:1px;background:#e0e0e0;"></div>
<div class="a" style="left:59px;top:375px;width:1336px;height:1px;background:#e0e0e0;"></div>
<div class="a" style="left:59px;top:400.7px;width:1336px;height:1px;background:#e0e0e0;"></div>
<div class="a" style="left:59px;top:426.4px;width:1336px;height:1px;background:#e0e0e0;"></div>
<div class="a" style="left:59px;top:452.1px;width:1336px;height:1px;background:#e0e0e0;"></div>
<div class="a" style="left:59px;top:477.8px;width:1336px;height:1px;background:#e0e0e0;"></div>
<div class="a" style="left:59px;top:503.5px;width:1336px;height:1px;background:#e0e0e0;"></div>
<div class="a" style="left:59px;top:529.2px;width:1336px;height:1px;background:#e0e0e0;"></div>
<div class="a" style="left:59px;top:554.9px;width:1336px;height:1px;background:#e0e0e0;"></div>
<div class="a" style="left:59px;top:580.6px;width:1336px;height:1px;background:#e0e0e0;"></div>
<div class="a" style="left:59px;top:606.3px;width:1336px;height:1px;background:#e0e0e0;"></div>
<div class="a" style="left:59px;top:632px;width:1336px;height:1px;background:#e0e0e0;"></div>
<div class="a" style="left:59px;top:657.7px;width:1336px;height:1px;background:#e0e0e0;"></div>
<div class="a" style="left:59px;top:683.4px;width:1336px;height:1px;background:#e0e0e0;"></div>
<div class="a" style="left:59px;top:709.1px;width:1336px;height:1px;background:#e0e0e0;"></div>
<div class="a" style="left:59px;top:734.8px;width:1336px;height:1px;background:#e0e0e0;"></div>
<div class="a" style="left:59px;top:760.5px;width:1336px;height:1px;background:#e0e0e0;"></div>
<div class="a" style="left:59px;top:786.2px;width:1336px;height:1px;background:#e0e0e0;"></div>
<div class="a" style="left:59px;top:811.9px;width:1336px;height:1px;background:#e0e0e0;"></div>
<div class="a" style="left:59px;top:837.6px;width:1336px;height:1px;background:#e0e0e0;"></div>
<div class="a" style="left:219.5px;top:298.4px;width:1px;height:539.6px;background:#e0e0e0;"></div>
<div class="a" style="left:304.5px;top:298.4px;width:1px;height:539.6px;background:#e0e0e0;"></div>
<div class="a" style="left:465.5px;top:298.4px;width:1px;height:539.6px;background:#e0e0e0;"></div>
<div class="a" style="left:550.8px;top:298.4px;width:1px;height:539.6px;background:#e0e0e0;"></div>
<div class="a" style="left:636.9px;top:298.4px;width:1px;height:539.6px;background:#e0e0e0;"></div>
<div class="a" style="left:722.9px;top:298.4px;width:1px;height:539.6px;background:#e0e0e0;"></div>
<div class="a" style="left:808.4px;top:298.4px;width:1px;height:539.6px;background:#e0e0e0;"></div>
<div class="a" style="left:894.4px;top:298.4px;width:1px;height:539.6px;background:#e0e0e0;"></div>
<div class="a" style="left:979.4px;top:298.4px;width:1px;height:539.6px;background:#e0e0e0;"></div>
<div class="a" style="left:1064.9px;top:298.4px;width:1px;height:539.6px;background:#e0e0e0;"></div>
<div class="a" style="left:1150.5px;top:298.4px;width:1px;height:539.6px;background:#e0e0e0;"></div>
<div class="a" style="left:1236px;top:298.4px;width:1px;height:539.6px;background:#e0e0e0;"></div>
<div class="a" style="left:1321.5px;top:298.4px;width:1px;height:539.6px;background:#e0e0e0;"></div>
<div class="a" style="left:305.5px;top:349.8px;width:160.5px;height:25.7px;background:#c6c6c6;"></div>
<div class="a" style="left:305.5px;top:375.5px;width:160.5px;height:25.7px;background:#c6c6c6;"></div>
<div class="a" style="left:305.5px;top:401.2px;width:160.5px;height:25.7px;background:#c6c6c6;"></div>
<div class="a" style="left:305.5px;top:426.9px;width:160.5px;height:25.7px;background:#c6c6c6;"></div>
<div class="a" style="left:305.5px;top:452.6px;width:160.5px;height:25.7px;background:#c6c6c6;"></div>
<div class="a" style="left:305.5px;top:478.3px;width:160.5px;height:25.7px;background:#c6c6c6;"></div>
<div class="a" style="left:305.5px;top:504px;width:160.5px;height:25.7px;background:#c6c6c6;"></div>
<div class="a" style="left:305.5px;top:529.7px;width:160.5px;height:25.7px;background:#c6c6c6;"></div>
<div class="a" style="left:305.5px;top:555.4px;width:160.5px;height:25.7px;background:#c6c6c6;"></div>
<div class="a" style="left:305.5px;top:581.1px;width:160.5px;height:25.7px;background:#c6c6c6;"></div>
<div class="a" style="left:305.5px;top:606.8px;width:160.5px;height:25.7px;background:#c6c6c6;"></div>
<div class="a" style="left:305.5px;top:632.5px;width:160.5px;height:25.7px;background:#c6c6c6;"></div>
<div class="a" style="left:305.5px;top:658.2px;width:160.5px;height:25.7px;background:#c6c6c6;"></div>
<div class="a" style="left:305.5px;top:683.9px;width:160.5px;height:25.7px;background:#c6c6c6;"></div>
<div class="a" style="left:305.5px;top:709.6px;width:160.5px;height:25.7px;background:#c6c6c6;"></div>
<div class="a" style="left:305.5px;top:735.3px;width:160.5px;height:25.7px;background:#c6c6c6;"></div>
<div class="a" style="left:305.5px;top:761px;width:160.5px;height:25.7px;background:#c6c6c6;"></div>
<div class="a" style="left:305.5px;top:786.7px;width:160.5px;height:25.7px;background:#c6c6c6;"></div>
<div class="a" style="left:305.5px;top:812.4px;width:160.5px;height:25.7px;background:#c6c6c6;"></div>
<div class="a" style="left:59px;top:297.65px;width:161.5px;height:1.5px;background:#333;"></div>
<div class="a" style="left:59px;top:323.35px;width:161.5px;height:1.5px;background:#333;"></div>
<div class="a" style="left:59px;top:349.05px;width:161.5px;height:1.5px;background:#333;"></div>
<div class="a" style="left:59px;top:374.75px;width:161.5px;height:1.5px;background:#333;"></div>
<div class="a" style="left:59px;top:400.45px;width:161.5px;height:1.5px;background:#333;"></div>
<div class="a" style="left:59px;top:426.15px;width:161.5px;height:1.5px;background:#333;"></div>
<div class="a" style="left:59px;top:451.85px;width:161.5px;height:1.5px;background:#333;"></div>
<div class="a" style="left:59px;top:477.55px;width:161.5px;height:1.5px;background:#333;"></div>
<div class="a" style="left:59px;top:503.25px;width:161.5px;height:1.5px;background:#333;"></div>
<div class="a" style="left:59px;top:528.95px;width:161.5px;height:1.5px;background:#333;"></div>
<div class="a" style="left:59px;top:554.65px;width:161.5px;height:1.5px;background:#333;"></div>
<div class="a" style="left:59px;top:580.35px;width:161.5px;height:1.5px;background:#333;"></div>
<div class="a" style="left:59px;top:606.05px;width:161.5px;height:1.5px;background:#333;"></div>
<div class="a" style="left:59px;top:631.75px;width:161.5px;height:1.5px;background:#333;"></div>
<div class="a" style="left:59px;top:657.45px;width:161.5px;height:1.5px;background:#333;"></div>
<div class="a" style="left:59px;top:683.15px;width:161.5px;height:1.5px;background:#333;"></div>
<div class="a" style="left:59px;top:708.85px;width:161.5px;height:1.5px;background:#333;"></div>
<div class="a" style="left:58.5px;top:298.4px;width:1.5px;height:411.2px;background:#333;"></div>
<div class="a" style="left:219.2px;top:298.4px;width:1.5px;height:411.2px;background:#333;"></div>
<div class="a" style="left:305px;top:297.65px;width:161.5px;height:1.5px;background:#333;"></div>
<div class="a" style="left:305px;top:323.35px;width:161.5px;height:1.5px;background:#333;"></div>
<div class="a" style="left:305px;top:349.05px;width:161.5px;height:1.5px;background:#333;"></div>
<div class="a" style="left:305px;top:374.75px;width:161.5px;height:1.5px;background:#333;"></div>
<div class="a" style="left:305px;top:400.45px;width:161.5px;height:1.5px;background:#333;"></div>
<div class="a" style="left:305px;top:426.15px;width:161.5px;height:1.5px;background:#333;"></div>
<div class="a" style="left:305px;top:451.85px;width:161.5px;height:1.5px;background:#333;"></div>
<div class="a" style="left:305px;top:477.55px;width:161.5px;height:1.5px;background:#333;"></div>
<div class="a" style="left:305px;top:503.25px;width:161.5px;height:1.5px;background:#333;"></div>
<div class="a" style="left:305px;top:528.95px;width:161.5px;height:1.5px;background:#333;"></div>
<div class="a" style="left:305px;top:554.65px;width:161.5px;height:1.5px;background:#333;"></div>
<div class="a" style="left:305px;top:580.35px;width:161.5px;height:1.5px;background:#333;"></div>
<div class="a" style="left:305px;top:606.05px;width:161.5px;height:1.5px;background:#333;"></div>
<div class="a" style="left:305px;top:631.75px;width:161.5px;height:1.5px;background:#333;"></div>
<div class="a" style="left:305px;top:657.45px;width:161.5px;height:1.5px;background:#333;"></div>
<div class="a" style="left:305px;top:683.15px;width:161.5px;height:1.5px;background:#333;"></div>
<div class="a" style="left:305px;top:708.85px;width:161.5px;height:1.5px;background:#333;"></div>
<div class="a" style="left:305px;top:734.55px;width:161.5px;height:1.5px;background:#333;"></div>
<div class="a" style="left:305px;top:760.25px;width:161.5px;height:1.5px;background:#333;"></div>
<div class="a" style="left:305px;top:785.95px;width:161.5px;height:1.5px;background:#333;"></div>
<div class="a" style="left:305px;top:811.65px;width:161.5px;height:1.5px;background:#333;"></div>
<div class="a" style="left:305px;top:837.35px;width:161.5px;height:1.5px;background:#333;"></div>
<div class="a" style="left:304.7px;top:298.4px;width:1.5px;height:539.6px;background:#333;"></div>
<div class="a" style="left:465.2px;top:298.4px;width:1.5px;height:539.6px;background:#333;"></div>
<div class="a" style="left:214px;top:704.6px;width:5px;height:4.5px;background:#3a50b0;"></div>
<div class="a" style="left:304px;top:322.6px;width:163.5px;height:515.9px;box-sizing:border-box;border:2px solid #217346;"></div>
<div class="a" style="left:462px;top:833px;width:5.5px;height:5.5px;background:#217346;"></div>
<div class="t" style="left:62.58px;top:329.41px;font-size:16.29px;color:#111;transform:scaleX(1.0597);-webkit-text-stroke:0.25px #111;">Fred Tyler</div>
<div class="t" style="left:62.53px;top:355.11px;font-size:16.29px;color:#111;transform:scaleX(1.0910);-webkit-text-stroke:0.25px #111;">Margaret Campbell</div>
<div class="t" style="left:62.52px;top:380.81px;font-size:16.29px;color:#111;transform:scaleX(1.0976);-webkit-text-stroke:0.25px #111;">Bob Wright</div>
<div class="t" style="left:63.23px;top:406.51px;font-size:16.29px;color:#111;transform:scaleX(1.0477);-webkit-text-stroke:0.25px #111;">Sylvia Walsh</div>
<div class="t" style="left:62.5px;top:432.21px;font-size:16.29px;color:#111;transform:scaleX(1.1143);-webkit-text-stroke:0.25px #111;">Rita Hilton</div>
<div class="t" style="left:63.27px;top:457.91px;font-size:16.29px;color:#111;-webkit-text-stroke:0.25px #111;">Sage Jackson</div>
<div class="t" style="left:62.49px;top:483.61px;font-size:16.29px;color:#111;transform:scaleX(1.1237);-webkit-text-stroke:0.25px #111;">Mark Wren</div>
<div class="t" style="left:62.58px;top:509.31px;font-size:16.29px;color:#111;transform:scaleX(1.0558);-webkit-text-stroke:0.25px #111;">Logan Harper</div>
<div class="t" style="left:63.15px;top:535.01px;font-size:16.29px;color:#111;transform:scaleX(1.0490);-webkit-text-stroke:0.25px #111;">Gabriel Parr</div>
<div class="t" style="left:63.75px;top:560.71px;font-size:16.29px;color:#111;transform:scaleX(1.0122);-webkit-text-stroke:0.25px #111;">Jayden Saunders</div>
<div class="t" style="left:62.54px;top:586.41px;font-size:16.29px;color:#111;transform:scaleX(1.0856);-webkit-text-stroke:0.25px #111;">Luke Underhill</div>
<div class="t" style="left:62.57px;top:612.11px;font-size:16.29px;color:#111;transform:scaleX(1.0626);-webkit-text-stroke:0.25px #111;">Ramon Vaughn</div>
<div class="t" style="left:62.58px;top:637.81px;font-size:16.29px;color:#111;transform:scaleX(1.0580);-webkit-text-stroke:0.25px #111;">Fred Mcgee</div>
<div class="t" style="left:62.63px;top:663.51px;font-size:16.29px;color:#111;transform:scaleX(1.0213);-webkit-text-stroke:0.25px #111;">Lexi Eyres</div>
<div class="t" style="left:63.14px;top:689.21px;font-size:16.29px;color:#111;transform:scaleX(1.0574);-webkit-text-stroke:0.25px #111;">Carmella Pickard</div>
<div class="t" style="left:308.58px;top:329.41px;font-size:16.29px;color:#111;transform:scaleX(1.0597);-webkit-text-stroke:0.25px #111;">Fred Tyler</div>
<div class="t" style="left:308.53px;top:355.11px;font-size:16.29px;color:#111;transform:scaleX(1.0910);-webkit-text-stroke:0.25px #111;">Margaret Campbell</div>
<div class="t" style="left:308.52px;top:380.81px;font-size:16.29px;color:#111;transform:scaleX(1.0976);-webkit-text-stroke:0.25px #111;">Bob Wright</div>
<div class="t" style="left:309.23px;top:406.51px;font-size:16.29px;color:#111;transform:scaleX(1.0477);-webkit-text-stroke:0.25px #111;">Sylvia Walsh</div>
<div class="t" style="left:308.5px;top:432.21px;font-size:16.29px;color:#111;transform:scaleX(1.1143);-webkit-text-stroke:0.25px #111;">Rita Hilton</div>
<div class="t" style="left:309.27px;top:457.91px;font-size:16.29px;color:#111;-webkit-text-stroke:0.25px #111;">Sage Jackson</div>
<div class="t" style="left:309.74px;top:483.61px;font-size:16.29px;color:#111;transform:scaleX(1.0664);-webkit-text-stroke:0.25px #111;">Judith Mackenzie</div>
<div class="t" style="left:309.22px;top:509.31px;font-size:16.29px;color:#111;transform:scaleX(1.0699);-webkit-text-stroke:0.25px #111;">Sebastian Taylor</div>
<div class="t" style="left:308.51px;top:535.01px;font-size:16.29px;color:#111;transform:scaleX(1.1101);-webkit-text-stroke:0.25px #111;">Daniel Mould</div>
<div class="t" style="left:308.55px;top:560.71px;font-size:16.29px;color:#111;transform:scaleX(1.0791);-webkit-text-stroke:0.25px #111;">Liam Pitt</div>
<div class="t" style="left:309.74px;top:586.41px;font-size:16.29px;color:#111;transform:scaleX(1.0515);-webkit-text-stroke:0.25px #111;">Joseph Doherty</div>
<div class="t" style="left:308.54px;top:612.11px;font-size:16.29px;color:#111;transform:scaleX(1.0856);-webkit-text-stroke:0.25px #111;">Luke Underhill</div>
<div class="t" style="left:308.57px;top:637.81px;font-size:16.29px;color:#111;transform:scaleX(1.0626);-webkit-text-stroke:0.25px #111;">Ramon Vaughn</div>
<div class="t" style="left:308.58px;top:663.51px;font-size:16.29px;color:#111;transform:scaleX(1.0580);-webkit-text-stroke:0.25px #111;">Fred Mcgee</div>
<div class="t" style="left:308.63px;top:689.21px;font-size:16.29px;color:#111;transform:scaleX(1.0213);-webkit-text-stroke:0.25px #111;">Lexi Eyres</div>
<div class="t" style="left:309.14px;top:714.91px;font-size:16.29px;color:#111;transform:scaleX(1.0574);-webkit-text-stroke:0.25px #111;">Carmella Pickard</div>
<div class="t" style="left:308.49px;top:740.61px;font-size:16.29px;color:#111;transform:scaleX(1.1237);-webkit-text-stroke:0.25px #111;">Mark Wren</div>
<div class="t" style="left:308.58px;top:766.31px;font-size:16.29px;color:#111;transform:scaleX(1.0558);-webkit-text-stroke:0.25px #111;">Logan Harper</div>
<div class="t" style="left:309.15px;top:792.01px;font-size:16.29px;color:#111;transform:scaleX(1.0490);-webkit-text-stroke:0.25px #111;">Gabriel Parr</div>
<div class="t" style="left:309.75px;top:817.71px;font-size:16.29px;color:#111;transform:scaleX(1.0122);-webkit-text-stroke:0.25px #111;">Jayden Saunders</div>
<div class="t" style="left:119.43px;top:303.71px;font-size:16.29px;color:#111;font-weight:bold;transform:scaleX(0.9300);-webkit-text-stroke:0.3px #111;">List 1</div>
<div class="t" style="left:365.8px;top:303.71px;font-size:16.29px;color:#111;font-weight:bold;transform:scaleX(0.9300);-webkit-text-stroke:0.3px #111;">List 2</div>
<div class="a" style="left:1394.5px;top:0px;width:1.5px;height:838px;background:#4a4a4a;"></div>
<div class="a" style="left:1144px;top:189px;width:251px;height:442px;background:#fff;box-shadow:-3px 3px 6px rgba(0,0,0,.18);"></div>
<div class="a" style="left:1394.5px;top:189px;width:1.5px;height:649px;background:#4a4a4a;"></div>
<svg class="a" style="left:1165px;top:206px;" width="42" height="38" viewBox="0 0 42 38"><rect x="1" y="1" width="36" height="28" fill="#fff" stroke="#555" stroke-width="1.5"/><rect x="10" y="10" width="16" height="9" fill="#fbd37a" stroke="#ef9a2b" stroke-width="1.3"/><path d="M10 1v28M26 1v28M1 10h36M1 19h36" stroke="#555" stroke-width="1.2"/><rect x="17" y="18" width="23" height="18" fill="#fff" stroke="#555" stroke-width="1.5"/><path d="M31 22l-7 3.5 7 3.5M24 31.5h7" fill="none" stroke="#555" stroke-width="1.2"/></svg>
<div class="t" style="left:1215.46px;top:216.57px;font-size:17.16px;color:#1a1a1a;font-weight:bold;transform:scaleX(0.8964);">Highlight Cells Rules</div>
<div class="a" style="left:1216.5px;top:233.2px;width:11.5px;height:1.2px;background:#1a1a1a;"></div>
<svg class="a" style="left:1165px;top:269px;" width="42" height="38" viewBox="0 0 42 38"><rect x="1" y="1" width="36" height="28" fill="#fff" stroke="#555" stroke-width="1.5"/><rect x="10" y="1" width="16" height="28" fill="#fbd37a" stroke="#ef9a2b" stroke-width="1.3"/><path d="M10 1v28M26 1v28M1 10h36M1 19h36" stroke="#555" stroke-width="1.2"/><path d="M18 18V4M13.5 8.5L18 4l4.5 4.5" fill="none" stroke="#444" stroke-width="1.4"/><rect x="17" y="18" width="23" height="18" fill="#fff" stroke="#555" stroke-width="1.5"/><text x="20.5" y="33" font-size="12" font-family="Liberation Sans" fill="#666" letter-spacing="-1">10</text></svg>
<div class="t" style="left:1216.34px;top:280.09px;font-size:16.44px;color:#1a1a1a;font-weight:bold;transform:scaleX(0.9931);">Top/Bottom Rules</div>
<div class="a" style="left:1216.5px;top:296.2px;width:9.5px;height:1.2px;background:#1a1a1a;"></div>
<div class="a" style="left:1204.6px;top:318px;width:189.4px;height:1px;background:#e1e1e1;"></div>
<svg class="a" style="left:1165px;top:335px;" width="40" height="32" viewBox="0 0 40 32"><rect x="1" y="1" width="36" height="29" fill="#fff" stroke="#555" stroke-width="1.5"/><rect x="7" y="1" width="10" height="9.5" fill="#77b0ea"/><rect x="7" y="10.5" width="3" height="9.5" fill="#77b0ea"/><rect x="7" y="20" width="9" height="10" fill="#77b0ea"/><path d="M7 1v29" stroke="#2b7bd0" stroke-width="2.4"/><path d="M7 1v29M31 1v29M1 10.5h36M1 20h36" stroke="#555" stroke-width="1.1"/></svg>
<div class="t" style="left:1215.44px;top:346.73px;font-size:16.15px;color:#1a1a1a;font-weight:bold;transform:scaleX(0.9739);">Data Bars</div>
<div class="a" style="left:1216.5px;top:362.6px;width:11.5px;height:1.2px;background:#1a1a1a;"></div>
<svg class="a" style="left:1165px;top:399px;" width="40" height="32" viewBox="0 0 40 32"><rect x="1" y="1" width="36" height="29" fill="#fff" stroke="#555" stroke-width="1.5"/><rect x="7" y="1.5" width="24" height="9" fill="#6ea8e6" stroke="#2b7bd0" stroke-width="1"/><rect x="7" y="10.5" width="24" height="9.5" fill="#fbd37a" stroke="#ef9a2b" stroke-width="1"/><rect x="7" y="20" width="24" height="10" fill="#f58b92" stroke="#e8373e" stroke-width="1"/><path d="M7 1v29M31 1v29M1 10.5h36M1 20h36" stroke="#555" stroke-width="1.1"/></svg>
<div class="t" style="left:1215.91px;top:410.13px;font-size:16.15px;color:#1a1a1a;font-weight:bold;transform:scaleX(0.9066);">Color Scales</div>
<div class="a" style="left:1260px;top:426px;width:11px;height:1.2px;background:#1a1a1a;"></div>
<svg class="a" style="left:1165px;top:462px;" width="40" height="32" viewBox="0 0 40 32"><rect x="1" y="1" width="36" height="29" fill="#fff" stroke="#555" stroke-width="1.5"/><path d="M7 1v29M31 1v29M1 10.5h36M1 20h36" stroke="#555" stroke-width="1.1"/><circle cx="12" cy="6" r="2" fill="#2b7bd0"/><circle cx="12" cy="15" r="2" fill="#e8373e"/><circle cx="12" cy="25" r="2" fill="#2b7bd0"/><path d="M21 6h7M21 15h7M21 25h7" stroke="#777" stroke-width="1.2"/></svg>
<div class="t" style="left:1215.47px;top:473.06px;font-size:16px;color:#1a1a1a;font-weight:bold;transform:scaleX(0.9582);">Icon Sets</div>
<div class="a" style="left:1216.5px;top:489px;width:5.5px;height:1.2px;background:#1a1a1a;"></div>
<svg class="a" style="left:1380px;top:214.8px;" width="10" height="14.2" viewBox="0 0 10 14.2"><path d="M1.5 1l6 6.099999999999994 -6 6.099999999999994" fill="none" stroke="#444" stroke-width="1.3"/></svg>
<svg class="a" style="left:1380px;top:277.6px;" width="10" height="14.9" viewBox="0 0 10 14.9"><path d="M1.5 1l6 6.449999999999989 -6 6.449999999999989" fill="none" stroke="#444" stroke-width="1.3"/></svg>
<svg class="a" style="left:1380px;top:344.3px;" width="10" height="14.3" viewBox="0 0 10 14.3"><path d="M1.5 1l6 6.150000000000006 -6 6.150000000000006" fill="none" stroke="#444" stroke-width="1.3"/></svg>
<svg class="a" style="left:1380px;top:407.5px;" width="10" height="14.5" viewBox="0 0 10 14.5"><path d="M1.5 1l6 6.25 -6 6.25" fill="none" stroke="#444" stroke-width="1.3"/></svg>
<svg class="a" style="left:1380px;top:470.5px;" width="10" height="14.5" viewBox="0 0 10 14.5"><path d="M1.5 1l6 6.25 -6 6.25" fill="none" stroke="#444" stroke-width="1.3"/></svg>
<div class="a" style="left:1145.5px;top:511.5px;width:248.5px;height:1px;background:#e1e1e1;"></div>
<div class="a" style="left:1145.5px;top:513.7px;width:248.5px;height:38.5px;background:#d2d2d2;"></div>
<svg class="a" style="left:1159px;top:520px;" width="24" height="22" viewBox="0 0 24 22"><rect x="1.5" y="1.5" width="20" height="18" fill="#fff" stroke="#555" stroke-width="1.4"/><rect x="7" y="7" width="9" height="7" fill="#fbc26a" stroke="#ef9a2b"/><path d="M7 1.5v18M16 1.5v18M1.5 7h20M1.5 14h20" stroke="#555" stroke-width="1.1"/></svg>
<div class="t" style="left:1192.24px;top:524.02px;font-size:17.45px;color:#333;transform:scaleX(0.8774);">New Rule...</div>
<div class="a" style="left:1193.5px;top:541.5px;width:10.5px;height:1.1px;background:#333;"></div>
<svg class="a" style="left:1159px;top:559px;" width="26" height="24" viewBox="0 0 26 24"><rect x="1.5" y="1.5" width="20" height="18" fill="#fff" stroke="#555" stroke-width="1.4"/><rect x="7" y="7" width="9" height="7" fill="#fbc26a" stroke="#ef9a2b"/><path d="M7 1.5v18M16 1.5v18M1.5 7h20M1.5 14h20" stroke="#555" stroke-width="1.1"/><path d="M10 18l8-8 5 5-8 8z" fill="#fff" stroke="#9b4fc8" stroke-width="1.6"/><path d="M10 18l3-3 5 5-3 3z" fill="#9b4fc8"/></svg>
<div class="t" style="left:1192.74px;top:562.89px;font-size:17.02px;color:#333;transform:scaleX(0.8917);">Clear Rules</div>
<div class="a" style="left:1193.5px;top:580px;width:9.5px;height:1.1px;background:#333;"></div>
<svg class="a" style="left:1380px;top:563px;" width="10" height="14" viewBox="0 0 10 14"><path d="M1.5 1l6 5.75-6 5.75" fill="none" stroke="#444" stroke-width="1.3"/></svg>
<svg class="a" style="left:1158px;top:597px;" width="26" height="22" viewBox="0 0 26 22"><path d="M1 17V2h17" fill="none" stroke="#555" stroke-width="1.2"/><rect x="3.5" y="3.5" width="20" height="16.5" fill="#fff" stroke="#555" stroke-width="1.4"/><rect x="9" y="9" width="9" height="6" fill="#fbc26a" stroke="#ef9a2b"/><path d="M9 3.5v16.5M18 3.5v16.5M3.5 9h20M3.5 15h20" stroke="#555" stroke-width="1.1"/></svg>
<div class="t" style="left:1192.24px;top:601.64px;font-size:16.73px;color:#333;transform:scaleX(0.9123);">Manage Rules...</div>
<div class="a" style="left:1256px;top:618px;width:10px;height:1.1px;background:#333;"></div>
<svg class="a" style="left:1231px;top:526px;" width="18" height="24" viewBox="0 0 18 24"><path d="M2 1v18l4.5-4 3 7 3-1.3-3-6.7h6z" fill="#fff" stroke="#222" stroke-width="1.3" stroke-linejoin="round"/></svg>
<div class="a" style="left:1396px;top:0px;width:24px;height:846px;background:#fff;"></div>
<div class="a" style="left:1394.5px;top:0px;width:1.5px;height:838px;background:#4a4a4a;"></div>
<div class="a" style="left:0px;top:891px;width:900px;height:645px;background:#f0f0f0;"></div>
<div class="a" style="left:0px;top:891px;width:900px;height:53px;background:#fff;"></div>
<div class="a" style="left:0px;top:890px;width:900px;height:1px;background:#d8d8d8;"></div>
<div class="a" style="left:587px;top:890px;width:176px;height:1.2px;background:#8a8a8a;"></div>
<div class="a" style="left:899px;top:892px;width:2px;height:644px;background:#333;"></div>
<div class="t" style="left:8.76px;top:906.73px;font-size:21.82px;color:#1e1e1e;transform:scaleX(0.9692);">Edit Formatting Rule</div>
<div class="t" style="left:772.75px;top:906.18px;font-size:24px;color:#222;transform:scaleX(0.7812);-webkit-text-stroke:0.4px #222;">?</div>
<svg class="a" style="left:846px;top:908px;" width="19" height="19" viewBox="0 0 19 19"><path d="M1.5 1.5l16 16M17.5 1.5l-16 16" stroke="#222" stroke-width="1.6"/></svg>
<div class="t" style="left:7.69px;top:966.49px;font-size:18.33px;color:#222;transform:scaleX(0.9769);">Select a Rule Type:</div>
<div class="a" style="left:8.5px;top:985px;width:9.5px;height:1.2px;background:#222;"></div>
<div class="a" style="left:7px;top:992px;width:881.5px;height:201px;box-sizing:border-box;border:2px solid #6a6a6a;background:#fff;"></div>
<div class="a" style="left:10px;top:1028.3px;width:876px;height:1px;background:#ececec;"></div>
<svg class="a" style="left:20px;top:1010.8px;" width="14" height="9" viewBox="0 0 14 9"><path d="M0.5 0.5L13 4.5L0.5 8.5z" fill="#111"/><rect x="0" y="3.6" width="13" height="1.8" fill="#111"/></svg>
<div class="t" style="left:39.07px;top:1006.66px;font-size:17.89px;color:#111;transform:scaleX(1.0354);">Format all cells based on their values</div>
<div class="a" style="left:10px;top:1060.5px;width:876px;height:1px;background:#ececec;"></div>
<svg class="a" style="left:20px;top:1043px;" width="14" height="9" viewBox="0 0 14 9"><path d="M0.5 0.5L13 4.5L0.5 8.5z" fill="#111"/><rect x="0" y="3.6" width="13" height="1.8" fill="#111"/></svg>
<div class="t" style="left:39.06px;top:1038.86px;font-size:17.89px;color:#111;transform:scaleX(1.0405);">Format only cells that contain</div>
<div class="a" style="left:10px;top:1092.7px;width:876px;height:1px;background:#ececec;"></div>
<svg class="a" style="left:20px;top:1075.2px;" width="14" height="9" viewBox="0 0 14 9"><path d="M0.5 0.5L13 4.5L0.5 8.5z" fill="#111"/><rect x="0" y="3.6" width="13" height="1.8" fill="#111"/></svg>
<div class="t" style="left:39.03px;top:1071.06px;font-size:17.89px;color:#111;transform:scaleX(1.0615);">Format only top or bottom ranked values</div>
<div class="a" style="left:10px;top:1124.9px;width:876px;height:1px;background:#ececec;"></div>
<svg class="a" style="left:20px;top:1107.4px;" width="14" height="9" viewBox="0 0 14 9"><path d="M0.5 0.5L13 4.5L0.5 8.5z" fill="#111"/><rect x="0" y="3.6" width="13" height="1.8" fill="#111"/></svg>
<div class="t" style="left:39.06px;top:1103.26px;font-size:17.89px;color:#111;transform:scaleX(1.0442);">Format only values that are above or below average</div>
<div class="a" style="left:10px;top:1157.1px;width:876px;height:1px;background:#ececec;"></div>
<svg class="a" style="left:20px;top:1139.6px;" width="14" height="9" viewBox="0 0 14 9"><path d="M0.5 0.5L13 4.5L0.5 8.5z" fill="#111"/><rect x="0" y="3.6" width="13" height="1.8" fill="#111"/></svg>
<div class="t" style="left:39.06px;top:1135.46px;font-size:17.89px;color:#111;transform:scaleX(1.0412);">Format only unique or duplicate values</div>
<div class="a" style="left:10.8px;top:1158.2px;width:875.2px;height:30.4px;background:#0078d7;"></div>
<svg class="a" style="left:20px;top:1172.2px;" width="14" height="9" viewBox="0 0 14 9"><path d="M0.5 0.5L13 4.5L0.5 8.5z" fill="#fff"/><rect x="0" y="3.6" width="13" height="1.8" fill="#fff"/></svg>
<div class="t" style="left:39.14px;top:1168.06px;font-size:17.89px;color:#fff;transform:scaleX(1.0532);">Use a formula to determine which cells to format</div>
<div class="t" style="left:6.98px;top:1225.39px;font-size:18.33px;color:#222;transform:scaleX(1.0068);">Edit the Rule Description:</div>
<div class="a" style="left:8.5px;top:1244px;width:10.5px;height:1.2px;background:#222;"></div>
<div class="a" style="left:7px;top:1251px;width:881.5px;height:222px;box-sizing:border-box;border:1px solid #a0a0a0;background:#fff;"></div>
<div class="t" style="left:20.76px;top:1266.24px;font-size:18.62px;color:#111;font-weight:bold;transform:scaleX(0.9882);">Format values where this formula is true:</div>
<div class="a" style="left:31px;top:1284.2px;width:11px;height:1.6px;background:#111;"></div>
<div class="a" style="left:19.7px;top:1298px;width:849.3px;height:33.7px;box-sizing:border-box;border:1px solid #adadad;background:#fff;"></div>
<div class="t" style="left:25.96px;top:1307.09px;font-size:18.33px;color:#111;transform:scaleX(0.9603);">=COUNTIF($A$2:$A$16, C2)&lt;&gt;0</div>
<div class="a" style="left:835px;top:1298px;width:34px;height:33.7px;box-sizing:border-box;border:1px solid #adadad;background:#f0f0f0;box-shadow:inset 0 0 0 1px #fff;"></div>
<svg class="a" style="left:843px;top:1303px;" width="16" height="20" viewBox="0 0 16 20"><path d="M7.5 1L1.5 8h4v6h4V8h4z" fill="#111"/><rect x="1.5" y="16" width="12" height="2" fill="#111"/></svg>
<div class="a" style="left:8px;top:1362px;width:878px;height:1px;background:#dcdcdc;"></div>
<div class="t" style="left:20.78px;top:1418.51px;font-size:20.07px;color:#111;font-weight:bold;transform:scaleX(0.9018);">Preview:</div>
<div class="a" style="left:110.8px;top:1393.3px;width:619.5px;height:69.2px;box-sizing:border-box;border:1px solid #6a6a6a;background:#ffe699;box-shadow:inset 0 0 0 1px #fff;"></div>
<div class="t" style="left:359.15px;top:1417.39px;font-size:22.69px;color:#222;transform:scaleX(0.9180);">AaBbCcYyZz</div>
<div class="a" style="left:748px;top:1408.8px;width:120px;height:38.2px;box-sizing:border-box;border:1px solid #c2c2c2;background:#e1e1e1;"></div>
<div class="t" style="left:771.4px;top:1420.11px;font-size:18.18px;color:#222;">Format...</div>
<div class="a" style="left:772.9px;top:1437px;width:10.1px;height:1.1px;background:#222;"></div>
<div class="a" style="left:618.6px;top:1481px;width:120px;height:37.6px;box-sizing:border-box;border:2px solid #0078d7;background:#e1e1e1;"></div>
<div class="t" style="left:665.8px;top:1491.49px;font-size:18.33px;color:#222;transform:scaleX(0.9219);">OK</div>
<div class="a" style="left:757px;top:1481px;width:121px;height:37.6px;box-sizing:border-box;border:1px solid #c2c2c2;background:#e1e1e1;"></div>
<div class="t" style="left:791.13px;top:1491.49px;font-size:18.33px;color:#222;transform:scaleX(0.9492);">Cancel</div>
<div class="a" style="left:890px;top:1520px;width:2.5px;height:2.5px;background:#b8b8b8;"></div>
<div class="a" style="left:886px;top:1524px;width:2.5px;height:2.5px;background:#b8b8b8;"></div>
<div class="a" style="left:890px;top:1524px;width:2.5px;height:2.5px;background:#b8b8b8;"></div>
<div class="a" style="left:882px;top:1528px;width:2.5px;height:2.5px;background:#b8b8b8;"></div>
<div class="a" style="left:886px;top:1528px;width:2.5px;height:2.5px;background:#b8b8b8;"></div>
<div class="a" style="left:890px;top:1528px;width:2.5px;height:2.5px;background:#b8b8b8;"></div>
<div class="a" style="left:0px;top:1535px;width:900px;height:1px;background:#222;"></div>
<svg class="a" style="left:672px;top:1066px;" width="22" height="30" viewBox="0 0 22 30"><path d="M2 1.5v22l5.5-5 4 9 3.5-1.5-4-8.5h7.5z" fill="#fff" stroke="#222" stroke-width="1.4" stroke-linejoin="round"/></svg>
<div class="a" style="left:963px;top:899px;width:457px;height:609px;background:#fff;"></div>
<div class="a" style="left:964px;top:900px;width:456px;height:28.3px;background:#e6e6e6;"></div>
<div class="a" style="left:1251.2px;top:900px;width:168.8px;height:28.3px;background:#d2d2d2;"></div>
<div class="a" style="left:964px;top:928.3px;width:25px;height:579.7px;background:#e6e6e6;"></div>
<div class="a" style="left:964px;top:1338.55px;width:25px;height:27.35px;background:#d2d2d2;"></div>
<div class="a" style="left:988.5px;top:904px;width:1px;height:24.3px;background:#c4c4c4;"></div>
<div class="a" style="left:1160px;top:904px;width:1px;height:24.3px;background:#c4c4c4;"></div>
<div class="a" style="left:1250.7px;top:904px;width:1px;height:24.3px;background:#c4c4c4;"></div>
<div class="a" style="left:964px;top:927.5px;width:456px;height:1px;background:#bdbdbd;"></div>
<div class="a" style="left:1251.2px;top:926.8px;width:168.8px;height:2px;background:#217346;"></div>
<svg class="a" style="left:968px;top:906px;" width="18" height="18" viewBox="0 0 18 18"><path d="M17 1v16H1z" fill="#b8b8b8"/></svg>
<div class="t" style="left:1068.88px;top:905.94px;font-size:18.62px;color:#262626;">A</div>
<div class="t" style="left:1199.88px;top:905.94px;font-size:18.62px;color:#262626;">B</div>
<div class="t" style="left:1330.85px;top:905.94px;font-size:18.62px;color:#217346;">C</div>
<div class="a" style="left:964px;top:955.15px;width:25px;height:1px;background:#cfcfcf;"></div>
<div class="a" style="left:989px;top:955.15px;width:431px;height:1px;background:#e0e0e0;"></div>
<div class="t" style="left:965.69px;top:933.54px;font-size:18.33px;color:#262626;transform:scaleX(0.9500);">1</div>
<div class="a" style="left:964px;top:982.5px;width:25px;height:1px;background:#cfcfcf;"></div>
<div class="a" style="left:989px;top:982.5px;width:431px;height:1px;background:#e0e0e0;"></div>
<div class="t" style="left:966.13px;top:960.89px;font-size:18.33px;color:#262626;transform:scaleX(0.9500);">2</div>
<div class="a" style="left:964px;top:1009.85px;width:25px;height:1px;background:#cfcfcf;"></div>
<div class="a" style="left:989px;top:1009.85px;width:431px;height:1px;background:#e0e0e0;"></div>
<div class="t" style="left:966.35px;top:988.24px;font-size:18.33px;color:#262626;transform:scaleX(0.9500);">3</div>
<div class="a" style="left:964px;top:1037.2px;width:25px;height:1px;background:#cfcfcf;"></div>
<div class="a" style="left:989px;top:1037.2px;width:431px;height:1px;background:#e0e0e0;"></div>
<div class="t" style="left:966.61px;top:1015.59px;font-size:18.33px;color:#262626;transform:scaleX(0.9500);">4</div>
<div class="a" style="left:964px;top:1064.55px;width:25px;height:1px;background:#cfcfcf;"></div>
<div class="a" style="left:989px;top:1064.55px;width:431px;height:1px;background:#e0e0e0;"></div>
<div class="t" style="left:966.3px;top:1042.94px;font-size:18.33px;color:#262626;transform:scaleX(0.9500);">5</div>
<div class="a" style="left:964px;top:1091.9px;width:25px;height:1px;background:#cfcfcf;"></div>
<div class="a" style="left:989px;top:1091.9px;width:431px;height:1px;background:#e0e0e0;"></div>
<div class="t" style="left:966.13px;top:1070.29px;font-size:18.33px;color:#262626;transform:scaleX(0.9500);">6</div>
<div class="a" style="left:964px;top:1119.25px;width:25px;height:1px;background:#cfcfcf;"></div>
<div class="a" style="left:989px;top:1119.25px;width:431px;height:1px;background:#e0e0e0;"></div>
<div class="t" style="left:966.13px;top:1097.64px;font-size:18.33px;color:#262626;transform:scaleX(0.9500);">7</div>
<div class="a" style="left:964px;top:1146.6px;width:25px;height:1px;background:#cfcfcf;"></div>
<div class="a" style="left:989px;top:1146.6px;width:431px;height:1px;background:#e0e0e0;"></div>
<div class="t" style="left:966.26px;top:1124.99px;font-size:18.33px;color:#262626;transform:scaleX(0.9500);">8</div>
<div class="a" style="left:964px;top:1173.95px;width:25px;height:1px;background:#cfcfcf;"></div>
<div class="a" style="left:989px;top:1173.95px;width:431px;height:1px;background:#e0e0e0;"></div>
<div class="t" style="left:966.17px;top:1152.34px;font-size:18.33px;color:#262626;transform:scaleX(0.9500);">9</div>
<div class="a" style="left:964px;top:1201.3px;width:25px;height:1px;background:#cfcfcf;"></div>
<div class="a" style="left:989px;top:1201.3px;width:431px;height:1px;background:#e0e0e0;"></div>
<div class="t" style="left:961.19px;top:1179.69px;font-size:18.33px;color:#262626;transform:scaleX(0.9500);">10</div>
<div class="a" style="left:964px;top:1228.65px;width:25px;height:1px;background:#cfcfcf;"></div>
<div class="a" style="left:989px;top:1228.65px;width:431px;height:1px;background:#e0e0e0;"></div>
<div class="t" style="left:961.19px;top:1207.04px;font-size:18.33px;color:#262626;transform:scaleX(0.9500);">11</div>
<div class="a" style="left:964px;top:1256px;width:25px;height:1px;background:#cfcfcf;"></div>
<div class="a" style="left:989px;top:1256px;width:431px;height:1px;background:#e0e0e0;"></div>
<div class="t" style="left:961.19px;top:1234.39px;font-size:18.33px;color:#262626;transform:scaleX(0.9500);">12</div>
<div class="a" style="left:964px;top:1283.35px;width:25px;height:1px;background:#cfcfcf;"></div>
<div class="a" style="left:989px;top:1283.35px;width:431px;height:1px;background:#e0e0e0;"></div>
<div class="t" style="left:961.19px;top:1261.74px;font-size:18.33px;color:#262626;transform:scaleX(0.9500);">13</div>
<div class="a" style="left:964px;top:1310.7px;width:25px;height:1px;background:#cfcfcf;"></div>
<div class="a" style="left:989px;top:1310.7px;width:431px;height:1px;background:#e0e0e0;"></div>
<div class="t" style="left:961.19px;top:1289.09px;font-size:18.33px;color:#262626;transform:scaleX(0.9500);">14</div>
<div class="a" style="left:964px;top:1338.05px;width:25px;height:1px;background:#cfcfcf;"></div>
<div class="a" style="left:989px;top:1338.05px;width:431px;height:1px;background:#e0e0e0;"></div>
<div class="t" style="left:961.19px;top:1316.44px;font-size:18.33px;color:#262626;transform:scaleX(0.9500);">15</div>
<div class="a" style="left:964px;top:1365.4px;width:25px;height:1px;background:#cfcfcf;"></div>
<div class="a" style="left:989px;top:1365.4px;width:431px;height:1px;background:#e0e0e0;"></div>
<div class="t" style="left:961.19px;top:1343.79px;font-size:18.33px;color:#217346;transform:scaleX(0.9500);">16</div>
<div class="a" style="left:964px;top:1392.75px;width:25px;height:1px;background:#cfcfcf;"></div>
<div class="a" style="left:989px;top:1392.75px;width:431px;height:1px;background:#e0e0e0;"></div>
<div class="t" style="left:961.19px;top:1371.14px;font-size:18.33px;color:#262626;transform:scaleX(0.9500);">17</div>
<div class="a" style="left:964px;top:1420.1px;width:25px;height:1px;background:#cfcfcf;"></div>
<div class="a" style="left:989px;top:1420.1px;width:431px;height:1px;background:#e0e0e0;"></div>
<div class="t" style="left:961.19px;top:1398.49px;font-size:18.33px;color:#262626;transform:scaleX(0.9500);">18</div>
<div class="a" style="left:964px;top:1447.45px;width:25px;height:1px;background:#cfcfcf;"></div>
<div class="a" style="left:989px;top:1447.45px;width:431px;height:1px;background:#e0e0e0;"></div>
<div class="t" style="left:961.19px;top:1425.84px;font-size:18.33px;color:#262626;transform:scaleX(0.9500);">19</div>
<div class="a" style="left:964px;top:1474.8px;width:25px;height:1px;background:#cfcfcf;"></div>
<div class="a" style="left:989px;top:1474.8px;width:431px;height:1px;background:#e0e0e0;"></div>
<div class="t" style="left:961.63px;top:1453.19px;font-size:18.33px;color:#262626;transform:scaleX(0.9500);">20</div>
<div class="a" style="left:964px;top:1502.15px;width:25px;height:1px;background:#cfcfcf;"></div>
<div class="a" style="left:989px;top:1502.15px;width:431px;height:1px;background:#e0e0e0;"></div>
<div class="t" style="left:961.63px;top:1480.54px;font-size:18.33px;color:#262626;transform:scaleX(0.9500);">21</div>
<div class="a" style="left:988.5px;top:928.3px;width:1px;height:579.7px;background:#c8c8c8;"></div>
<div class="a" style="left:988px;top:1338.55px;width:1.5px;height:27.35px;background:#217346;"></div>
<div class="a" style="left:1160px;top:928.3px;width:1px;height:579.7px;background:#e0e0e0;"></div>
<div class="a" style="left:1250.7px;top:928.3px;width:1px;height:579.7px;background:#e0e0e0;"></div>
<div class="a" style="left:1251.2px;top:955.65px;width:168.8px;height:27.35px;background:#ffe699;"></div>
<div class="a" style="left:1251.2px;top:983px;width:168.8px;height:27.35px;background:#ffe699;"></div>
<div class="a" style="left:1251.2px;top:1010.35px;width:168.8px;height:27.35px;background:#ffe699;"></div>
<div class="a" style="left:1251.2px;top:1037.7px;width:168.8px;height:27.35px;background:#ffe699;"></div>
<div class="a" style="left:1251.2px;top:1065.05px;width:168.8px;height:27.35px;background:#ffe699;"></div>
<div class="a" style="left:1251.2px;top:1092.4px;width:168.8px;height:27.35px;background:#ffe699;"></div>
<div class="a" style="left:1251.2px;top:1256.5px;width:168.8px;height:27.35px;background:#ffe699;"></div>
<div class="a" style="left:1251.2px;top:1283.85px;width:168.8px;height:27.35px;background:#ffe699;"></div>
<div class="a" style="left:1251.2px;top:1311.2px;width:168.8px;height:27.35px;background:#ffe699;"></div>
<div class="a" style="left:1251.2px;top:1338.55px;width:168.8px;height:27.35px;background:#ffe699;"></div>
<div class="a" style="left:1251.2px;top:1365.9px;width:168.8px;height:27.35px;background:#ffe699;"></div>
<div class="a" style="left:1251.2px;top:1393.25px;width:168.8px;height:27.35px;background:#ffe699;"></div>
<div class="a" style="left:1251.2px;top:1420.6px;width:168.8px;height:27.35px;background:#ffe699;"></div>
<div class="a" style="left:1251.2px;top:1447.95px;width:168.8px;height:27.35px;background:#ffe699;"></div>
<div class="a" style="left:1251.2px;top:1475.3px;width:168.8px;height:27.35px;background:#ffe699;"></div>
<div class="a" style="left:989px;top:927.55px;width:172px;height:1.5px;background:#333;"></div>
<div class="a" style="left:989px;top:954.9px;width:172px;height:1.5px;background:#333;"></div>
<div class="a" style="left:989px;top:982.25px;width:172px;height:1.5px;background:#333;"></div>
<div class="a" style="left:989px;top:1009.6px;width:172px;height:1.5px;background:#333;"></div>
<div class="a" style="left:989px;top:1036.95px;width:172px;height:1.5px;background:#333;"></div>
<div class="a" style="left:989px;top:1064.3px;width:172px;height:1.5px;background:#333;"></div>
<div class="a" style="left:989px;top:1091.65px;width:172px;height:1.5px;background:#333;"></div>
<div class="a" style="left:989px;top:1119px;width:172px;height:1.5px;background:#333;"></div>
<div class="a" style="left:989px;top:1146.35px;width:172px;height:1.5px;background:#333;"></div>
<div class="a" style="left:989px;top:1173.7px;width:172px;height:1.5px;background:#333;"></div>
<div class="a" style="left:989px;top:1201.05px;width:172px;height:1.5px;background:#333;"></div>
<div class="a" style="left:989px;top:1228.4px;width:172px;height:1.5px;background:#333;"></div>
<div class="a" style="left:989px;top:1255.75px;width:172px;height:1.5px;background:#333;"></div>
<div class="a" style="left:989px;top:1283.1px;width:172px;height:1.5px;background:#333;"></div>
<div class="a" style="left:989px;top:1310.45px;width:172px;height:1.5px;background:#333;"></div>
<div class="a" style="left:989px;top:1337.8px;width:172px;height:1.5px;background:#333;"></div>
<div class="a" style="left:989px;top:1365.15px;width:172px;height:1.5px;background:#333;"></div>
<div class="a" style="left:988.7px;top:928.3px;width:1.5px;height:437.6px;background:#333;"></div>
<div class="a" style="left:1159.7px;top:928.3px;width:1.5px;height:437.6px;background:#333;"></div>
<div class="a" style="left:1251px;top:927.55px;width:169px;height:1.5px;background:#333;"></div>
<div class="a" style="left:1251px;top:954.9px;width:169px;height:1.5px;background:#333;"></div>
<div class="a" style="left:1251px;top:982.25px;width:169px;height:1.5px;background:#333;"></div>
<div class="a" style="left:1251px;top:1009.6px;width:169px;height:1.5px;background:#333;"></div>
<div class="a" style="left:1251px;top:1036.95px;width:169px;height:1.5px;background:#333;"></div>
<div class="a" style="left:1251px;top:1064.3px;width:169px;height:1.5px;background:#333;"></div>
<div class="a" style="left:1251px;top:1091.65px;width:169px;height:1.5px;background:#333;"></div>
<div class="a" style="left:1251px;top:1119px;width:169px;height:1.5px;background:#333;"></div>
<div class="a" style="left:1251px;top:1146.35px;width:169px;height:1.5px;background:#333;"></div>
<div class="a" style="left:1251px;top:1173.7px;width:169px;height:1.5px;background:#333;"></div>
<div class="a" style="left:1251px;top:1201.05px;width:169px;height:1.5px;background:#333;"></div>
<div class="a" style="left:1251px;top:1228.4px;width:169px;height:1.5px;background:#333;"></div>
<div class="a" style="left:1251px;top:1255.75px;width:169px;height:1.5px;background:#333;"></div>
<div class="a" style="left:1251px;top:1283.1px;width:169px;height:1.5px;background:#333;"></div>
<div class="a" style="left:1251px;top:1310.45px;width:169px;height:1.5px;background:#333;"></div>
<div class="a" style="left:1251px;top:1337.8px;width:169px;height:1.5px;background:#333;"></div>
<div class="a" style="left:1251px;top:1365.15px;width:169px;height:1.5px;background:#333;"></div>
<div class="a" style="left:1251px;top:1392.5px;width:169px;height:1.5px;background:#333;"></div>
<div class="a" style="left:1251px;top:1419.85px;width:169px;height:1.5px;background:#333;"></div>
<div class="a" style="left:1251px;top:1447.2px;width:169px;height:1.5px;background:#333;"></div>
<div class="a" style="left:1251px;top:1474.55px;width:169px;height:1.5px;background:#333;"></div>
<div class="a" style="left:1251px;top:1501.9px;width:169px;height:1.5px;background:#333;"></div>
<div class="a" style="left:1250.7px;top:928.3px;width:1.5px;height:574.35px;background:#333;"></div>
<div class="a" style="left:1155px;top:1359.9px;width:5px;height:5.5px;background:#3a50b0;"></div>
<div class="a" style="left:1414px;top:1496.65px;width:4px;height:5.5px;background:#3a50b0;"></div>
<div class="a" style="left:1250.5px;top:1337.55px;width:169.5px;height:28.85px;box-sizing:border-box;border:1.5px solid #217346;border-right:none;"></div>
<div class="t" style="left:992.28px;top:961.75px;font-size:17.31px;color:#111;transform:scaleX(1.0632);-webkit-text-stroke:0.25px #111;">Fred Tyler</div>
<div class="t" style="left:992.24px;top:989.1px;font-size:17.31px;color:#111;transform:scaleX(1.0946);-webkit-text-stroke:0.25px #111;">Margaret Campbell</div>
<div class="t" style="left:992.23px;top:1016.45px;font-size:17.31px;color:#111;transform:scaleX(1.1012);-webkit-text-stroke:0.25px #111;">Bob Wright</div>
<div class="t" style="left:992.98px;top:1043.8px;font-size:17.31px;color:#111;transform:scaleX(1.0512);-webkit-text-stroke:0.25px #111;">Sylvia Walsh</div>
<div class="t" style="left:992.2px;top:1071.15px;font-size:17.31px;color:#111;transform:scaleX(1.1180);-webkit-text-stroke:0.25px #111;">Rita Hilton</div>
<div class="t" style="left:993.02px;top:1098.5px;font-size:17.31px;color:#111;-webkit-text-stroke:0.25px #111;">Sage Jackson</div>
<div class="t" style="left:992.19px;top:1125.85px;font-size:17.31px;color:#111;transform:scaleX(1.1274);-webkit-text-stroke:0.25px #111;">Mark Wren</div>
<div class="t" style="left:992.29px;top:1153.2px;font-size:17.31px;color:#111;transform:scaleX(1.0593);-webkit-text-stroke:0.25px #111;">Logan Harper</div>
<div class="t" style="left:992.89px;top:1180.55px;font-size:17.31px;color:#111;transform:scaleX(1.0525);-webkit-text-stroke:0.25px #111;">Gabriel Parr</div>
<div class="t" style="left:993.54px;top:1207.9px;font-size:17.31px;color:#111;transform:scaleX(1.0155);-webkit-text-stroke:0.25px #111;">Jayden Saunders</div>
<div class="t" style="left:992.24px;top:1235.25px;font-size:17.31px;color:#111;transform:scaleX(1.0892);-webkit-text-stroke:0.25px #111;">Luke Underhill</div>
<div class="t" style="left:992.28px;top:1262.6px;font-size:17.31px;color:#111;transform:scaleX(1.0661);-webkit-text-stroke:0.25px #111;">Ramon Vaughn</div>
<div class="t" style="left:992.28px;top:1289.95px;font-size:17.31px;color:#111;transform:scaleX(1.0615);-webkit-text-stroke:0.25px #111;">Fred Mcgee</div>
<div class="t" style="left:992.34px;top:1317.3px;font-size:17.31px;color:#111;transform:scaleX(1.0246);-webkit-text-stroke:0.25px #111;">Lexi Eyres</div>
<div class="t" style="left:992.88px;top:1344.65px;font-size:17.31px;color:#111;transform:scaleX(1.0609);-webkit-text-stroke:0.25px #111;">Carmella Pickard</div>
<div class="t" style="left:1254.98px;top:961.75px;font-size:17.31px;color:#111;transform:scaleX(1.0632);-webkit-text-stroke:0.25px #111;">Fred Tyler</div>
<div class="t" style="left:1254.94px;top:989.1px;font-size:17.31px;color:#111;transform:scaleX(1.0946);-webkit-text-stroke:0.25px #111;">Margaret Campbell</div>
<div class="t" style="left:1254.93px;top:1016.45px;font-size:17.31px;color:#111;transform:scaleX(1.1012);-webkit-text-stroke:0.25px #111;">Bob Wright</div>
<div class="t" style="left:1255.68px;top:1043.8px;font-size:17.31px;color:#111;transform:scaleX(1.0512);-webkit-text-stroke:0.25px #111;">Sylvia Walsh</div>
<div class="t" style="left:1254.9px;top:1071.15px;font-size:17.31px;color:#111;transform:scaleX(1.1180);-webkit-text-stroke:0.25px #111;">Rita Hilton</div>
<div class="t" style="left:1255.72px;top:1098.5px;font-size:17.31px;color:#111;-webkit-text-stroke:0.25px #111;">Sage Jackson</div>
<div class="t" style="left:1256.22px;top:1125.85px;font-size:17.31px;color:#111;transform:scaleX(1.0699);-webkit-text-stroke:0.25px #111;">Judith Mackenzie</div>
<div class="t" style="left:1255.66px;top:1153.2px;font-size:17.31px;color:#111;transform:scaleX(1.0734);-webkit-text-stroke:0.25px #111;">Sebastian Taylor</div>
<div class="t" style="left:1254.91px;top:1180.55px;font-size:17.31px;color:#111;transform:scaleX(1.1137);-webkit-text-stroke:0.25px #111;">Daniel Mould</div>
<div class="t" style="left:1254.95px;top:1207.9px;font-size:17.31px;color:#111;transform:scaleX(1.0826);-webkit-text-stroke:0.25px #111;">Liam Pitt</div>
<div class="t" style="left:1256.23px;top:1235.25px;font-size:17.31px;color:#111;transform:scaleX(1.0550);-webkit-text-stroke:0.25px #111;">Joseph Doherty</div>
<div class="t" style="left:1254.94px;top:1262.6px;font-size:17.31px;color:#111;transform:scaleX(1.0892);-webkit-text-stroke:0.25px #111;">Luke Underhill</div>
<div class="t" style="left:1254.98px;top:1289.95px;font-size:17.31px;color:#111;transform:scaleX(1.0661);-webkit-text-stroke:0.25px #111;">Ramon Vaughn</div>
<div class="t" style="left:1254.98px;top:1317.3px;font-size:17.31px;color:#111;transform:scaleX(1.0615);-webkit-text-stroke:0.25px #111;">Fred Mcgee</div>
<div class="t" style="left:1255.04px;top:1344.65px;font-size:17.31px;color:#111;transform:scaleX(1.0246);-webkit-text-stroke:0.25px #111;">Lexi Eyres</div>
<div class="t" style="left:1255.58px;top:1372px;font-size:17.31px;color:#111;transform:scaleX(1.0609);-webkit-text-stroke:0.25px #111;">Carmella Pickard</div>
<div class="t" style="left:1254.89px;top:1399.35px;font-size:17.31px;color:#111;transform:scaleX(1.1274);-webkit-text-stroke:0.25px #111;">Mark Wren</div>
<div class="t" style="left:1254.99px;top:1426.7px;font-size:17.31px;color:#111;transform:scaleX(1.0593);-webkit-text-stroke:0.25px #111;">Logan Harper</div>
<div class="t" style="left:1255.59px;top:1454.05px;font-size:17.31px;color:#111;transform:scaleX(1.0525);-webkit-text-stroke:0.25px #111;">Gabriel Parr</div>
<div class="t" style="left:1256.24px;top:1481.4px;font-size:17.31px;color:#111;transform:scaleX(1.0155);-webkit-text-stroke:0.25px #111;">Jayden Saunders</div>
<div class="t" style="left:1053.87px;top:934.35px;font-size:17.31px;color:#111;font-weight:bold;transform:scaleX(0.9300);-webkit-text-stroke:0.3px #111;">List 1</div>
<div class="t" style="left:1316.65px;top:934.35px;font-size:17.31px;color:#111;font-weight:bold;transform:scaleX(0.9300);-webkit-text-stroke:0.3px #111;">List 2</div>
<svg class="a" style="left:993px;top:974.5px;" width="14" height="8" viewBox="0 0 14 8"><path d="M1 4h9M7 1l4 3-4 3" fill="none" stroke="#111" stroke-width="2"/></svg>
<div class="a" style="left:962px;top:898.5px;width:458px;height:2px;background:#333;"></div>
<div class="a" style="left:962px;top:898.5px;width:2px;height:610.5px;background:#333;"></div>
<div class="a" style="left:962px;top:1507px;width:458px;height:1.6px;background:#333;"></div>
<div class="a" style="left:105px;top:51px;width:69px;height:42px;box-sizing:border-box;border:3.5px solid #f53a3c;box-shadow:1px 2px 3px rgba(0,0,0,.3), inset 1px 2px 3px rgba(0,0,0,.22);"></div>
<div class="a" style="left:1138.4px;top:83.7px;width:112.7px;height:112.9px;box-sizing:border-box;border:3.5px solid #f53a3c;box-shadow:1px 2px 3px rgba(0,0,0,.3), inset 1px 2px 3px rgba(0,0,0,.22);"></div>
<div class="a" style="left:280px;top:300px;width:220px;height:538px;overflow:hidden;"><div class="a" style="left:15.8px;top:27.9px;width:179.5px;height:532.1px;box-sizing:border-box;border:3.5px solid #f53a3c;box-shadow:1px 2px 3px rgba(0,0,0,.3), inset 1px 2px 3px rgba(0,0,0,.22);"></div></div>
<svg class="a" style="left:0;top:0;overflow:visible;" width="1420" height="1536"><defs><filter id="ds1" x="-50%" y="-50%" width="200%" height="200%"><feDropShadow dx="1" dy="3" stdDeviation="2.2" flood-color="#000" flood-opacity=".55"/></filter></defs><path d="M523 418.5L534.5 408V444" fill="none" stroke="#fff" stroke-width="13" stroke-linejoin="round" stroke-linecap="round" filter="url(#ds1)"/><path d="M523 418.5L534.5 408V444" fill="none" stroke="#f83838" stroke-width="4.6" stroke-linejoin="miter" stroke-linecap="butt"/></svg>
<div class="a" style="left:1152.8px;top:505.9px;width:121.8px;height:45px;box-sizing:border-box;border:3.5px solid #f53a3c;box-shadow:1px 2px 3px rgba(0,0,0,.3), inset 1px 2px 3px rgba(0,0,0,.22);"></div>
<svg class="a" style="left:0;top:0;overflow:visible;" width="1420" height="1536"><defs><filter id="ds2" x="-50%" y="-50%" width="200%" height="200%"><feDropShadow dx="1" dy="3" stdDeviation="2.2" flood-color="#000" flood-opacity=".55"/></filter></defs><path d="M1105.5 529C1105.5 523 1110 519.5 1115.5 519.5C1121.5 519.5 1125.5 523.5 1125.5 529C1125.5 534 1122 538 1117 543L1105.5 553.5H1126.5" fill="none" stroke="#fff" stroke-width="13" stroke-linejoin="round" stroke-linecap="round" filter="url(#ds2)"/><path d="M1105.5 529C1105.5 523 1110 519.5 1115.5 519.5C1121.5 519.5 1125.5 523.5 1125.5 529C1125.5 534 1122 538 1117 543L1105.5 553.5H1126.5" fill="none" stroke="#f83838" stroke-width="4.6" stroke-linejoin="miter" stroke-linecap="butt"/></svg>
<div class="a" style="left:-5px;top:1143.7px;width:469.8px;height:50.7px;box-sizing:border-box;border:3.5px solid #f53a3c;box-shadow:1px 2px 3px rgba(0,0,0,.3), inset 1px 2px 3px rgba(0,0,0,.22);"></div>
<div class="a" style="left:7.9px;top:1281.2px;width:325.9px;height:64.8px;box-sizing:border-box;border:3.5px solid #f53a3c;box-shadow:1px 2px 3px rgba(0,0,0,.3), inset 1px 2px 3px rgba(0,0,0,.22);"></div>
<div class="a" style="left:12px;top:1372.4px;width:735.4px;height:162.6px;box-sizing:border-box;border:3.5px solid #f53a3c;box-shadow:1px 2px 3px rgba(0,0,0,.3), inset 1px 2px 3px rgba(0,0,0,.22);"></div>
<svg class="a" style="left:0;top:0;overflow:visible;" width="1420" height="1536"><defs><filter id="ds3" x="-50%" y="-50%" width="200%" height="200%"><feDropShadow dx="1" dy="3" stdDeviation="2.2" flood-color="#000" flood-opacity=".55"/></filter></defs><path d="M435 1219.5C436.5 1213 441.5 1210.3 448 1210.3C456 1210.3 460.8 1214.5 460.8 1220.5C460.8 1227 455.5 1231 448 1231H444.5M448 1231C457 1231 463 1236 463 1243C463 1251 457 1255.3 448.5 1255.3C440 1255.3 435 1251.5 433.3 1244.5" fill="none" stroke="#fff" stroke-width="13" stroke-linejoin="round" stroke-linecap="round" filter="url(#ds3)"/><path d="M435 1219.5C436.5 1213 441.5 1210.3 448 1210.3C456 1210.3 460.8 1214.5 460.8 1220.5C460.8 1227 455.5 1231 448 1231H444.5M448 1231C457 1231 463 1236 463 1243C463 1251 457 1255.3 448.5 1255.3C440 1255.3 435 1251.5 433.3 1244.5" fill="none" stroke="#f83838" stroke-width="4.6" stroke-linejoin="miter" stroke-linecap="butt"/></svg>
<svg class="a" style="left:0;top:0;overflow:visible;" width="1420" height="1536"><defs><filter id="ds4" x="-50%" y="-50%" width="200%" height="200%"><feDropShadow dx="1" dy="3" stdDeviation="2.2" flood-color="#000" flood-opacity=".55"/></filter></defs><path d="M235.5 1472H202.5L227.5 1438.5V1486.5" fill="none" stroke="#fff" stroke-width="13" stroke-linejoin="round" stroke-linecap="round" filter="url(#ds4)"/><path d="M235.5 1472H202.5L227.5 1438.5V1486.5" fill="none" stroke="#f83838" stroke-width="4.6" stroke-linejoin="miter" stroke-linecap="butt"/></svg>
<div class="a" style="left:1248px;top:949.4px;width:174px;height:162.6px;box-sizing:border-box;border:3.5px solid #f53a3c;box-shadow:1px 2px 3px rgba(0,0,0,.3), inset 1px 2px 3px rgba(0,0,0,.22);"></div>
<div class="a" style="left:1245px;top:1252px;width:177px;height:254px;box-sizing:border-box;border:3.5px solid #f53a3c;box-shadow:1px 2px 3px rgba(0,0,0,.3), inset 1px 2px 3px rgba(0,0,0,.22);"></div></body></html>
